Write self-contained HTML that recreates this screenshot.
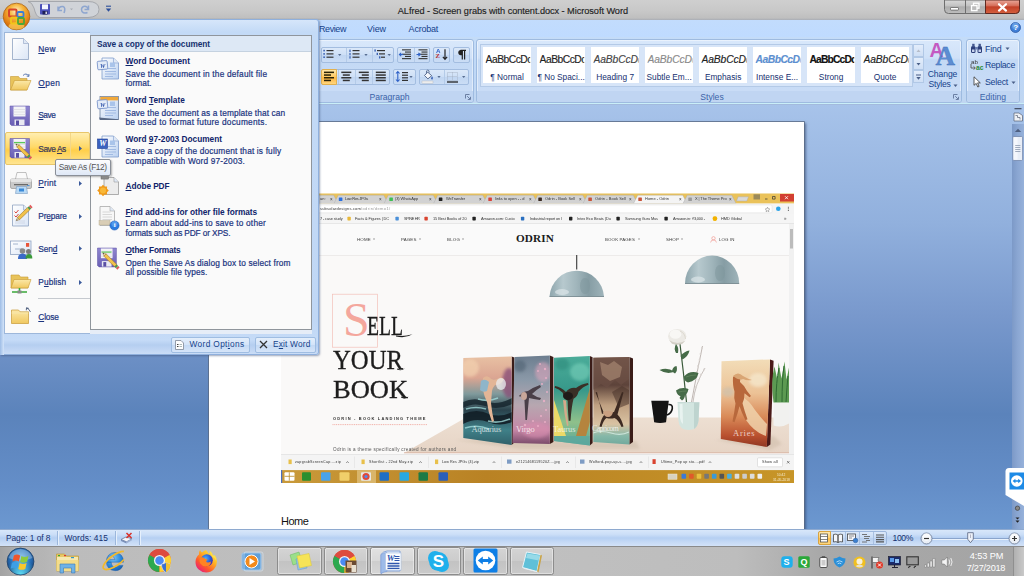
<!DOCTYPE html>
<html lang="en"><head><meta charset="utf-8"><title>ALfred - Screen grabs with content.docx - Microsoft Word</title>
<style>
html,body{margin:0;padding:0;}
body{width:1024px;height:576px;overflow:hidden;position:relative;background:#6f95cb;font-family:"Liberation Sans",sans-serif;}
.t{position:absolute;white-space:nowrap;}
.t u{text-decoration:underline;text-underline-offset:1px;}
div,svg,span{box-sizing:border-box;}
</style></head>
<body>
<div style="position:absolute;left:0px;top:0px;width:1024px;height:19.5px;background:linear-gradient(#cfcfcf,#c8c8c8 55%,#bfbfbf 90%,#a9adb5 100%);"></div>
<div style="position:absolute;left:0px;top:19.5px;width:1024px;height:17.5px;background:linear-gradient(#c2dcfd,#bfdbff);"></div>
<div style="position:absolute;left:0px;top:37px;width:1024px;height:69px;background:linear-gradient(#c4dcf8 0,#bed7f6 60%,#c0d6f1 65.5px,#c9eef8 66.5px,#a3badd 67.5px,#a9c5ed 69px);"></div>
<div style="position:absolute;left:0px;top:105px;width:1024px;height:424px;background:linear-gradient(#a7c3ea 0%,#91b0dd 28%,#7898cc 50%,#5b83bb 73%,#648ec8 90%,#6c98d0 100%);"></div>
<div style="position:absolute;left:209px;top:121.5px;width:595.4px;height:408px;background:#fff;box-shadow:0 0 0 .8px #5b6b85,2px 1px 2.5px rgba(50,70,110,.65);"></div>
<div style="position:absolute;left:0px;top:529px;width:1024px;height:17px;background:linear-gradient(#d8e7fa,#cbdef7 28%,#b5cff2 50%,#c3d8f5 72%,#d2e2f8);border-top:1px solid #8ea9cf;"></div>
<div style="position:absolute;left:0px;top:546px;width:1024px;height:30px;background:linear-gradient(90deg,#a6a6a6 0,#bcbcbc 6%,#c0c0c0 50%,#bdbdbd 72%,#a9a9a9 80%,#a4a4a4 100%);border-top:1px solid #8a8a8a;"></div>
<span class="t" style="left:397.80px;top:6.90px;font-size:9.20px;line-height:9.20px;color:#1e1e1e;font-family:'Liberation Sans',sans-serif;letter-spacing:-0.054px;-webkit-text-stroke:.15px;">ALfred - Screen grabs with content.docx - Microsoft Word</span>
<svg style="position:absolute;left:26px;top:0px;" width="80" height="19" viewBox="0 0 80 19"><path d="M2 1.5 Q6 2 8 8 Q10 17 14 17.5 H62 Q73 17 73 9.5 Q73 1.5 62 1.5 Z" fill="#d0d3d8" stroke="#9a9da3" stroke-width=".8"/><rect x="14" y="4" width="10" height="10.5" rx=".8" fill="#4a4fb8"/><rect x="16" y="4.3" width="6" height="5" fill="#f4f6ff"/><rect x="16.5" y="11" width="5" height="3.5" fill="#1d1f55"/><rect x="19.5" y="11.6" width="1.4" height="2.4" fill="#e8e8f8"/><path d="M32 6.5 v4 h4 M32.3 10.2 Q33 6 37 6.5 Q40 7.5 38 13" fill="none" stroke="#8ea6cf" stroke-width="1.5"/><path d="M44 8.5h3l-1.5 1.8z" fill="#a7abb3"/><path d="M62.5 5.5 v4 h-4 M62.3 9.3 Q61 5.5 57.5 6.5 Q54.5 8 56 11.5 Q58 14 61.5 12.5" fill="none" stroke="#8ea6cf" stroke-width="1.5"/></svg>
<svg style="position:absolute;left:105px;top:5px;" width="7" height="8" viewBox="0 0 7 8"><path d="M1 1.2h5" stroke="#2d4f9a" stroke-width="1.1"/><path d="M.8 3.5h5.4L3.5 6.8z" fill="#2d4f9a"/></svg>
<svg style="position:absolute;left:944px;top:0px;" width="76" height="15" viewBox="0 0 76 15"><defs><linearGradient id="wc1" x1="0" y1="0" x2="0" y2="1"><stop offset="0" stop-color="#d9d9d9"/><stop offset=".45" stop-color="#c2c2c2"/><stop offset=".5" stop-color="#adadad"/><stop offset="1" stop-color="#bdbdbd"/></linearGradient><linearGradient id="wc2" x1="0" y1="0" x2="0" y2="1"><stop offset="0" stop-color="#e9a99b"/><stop offset=".45" stop-color="#d46a55"/><stop offset=".5" stop-color="#c13f27"/><stop offset="1" stop-color="#d5603e"/></linearGradient></defs><path d="M.5 0V9.5Q.5 13.5 4.5 13.5H71.5Q75.5 13.5 75.5 9.5V0Z" fill="url(#wc1)" stroke="#6e6e6e" stroke-width="1"/><path d="M41.5 0V13.5H71.5Q75.5 13.5 75.5 9.5V0Z" fill="url(#wc2)" stroke="#5e2a22" stroke-width="1"/><path d="M21.5 0V13.5" stroke="#6e6e6e" stroke-width="1"/><rect x="6.5" y="7.5" width="8" height="2.6" rx=".6" fill="#fff" stroke="#555" stroke-width=".7"/><rect x="29.5" y="3.2" width="5.5" height="5" fill="none" stroke="#fff" stroke-width="1.3"/><rect x="27.5" y="5.6" width="5.5" height="5" fill="#bbb" stroke="#fff" stroke-width="1.3"/><path d="M55 4.2L62 10.6M62 4.2L55 10.6" stroke="#fff" stroke-width="2.2" stroke-linecap="round"/></svg>
<span class="t" style="left:319.00px;top:25.40px;font-size:9.00px;line-height:9.00px;color:#15428b;font-family:'Liberation Sans',sans-serif;letter-spacing:-0.418px;">Review</span>
<span class="t" style="left:367.00px;top:25.40px;font-size:9.00px;line-height:9.00px;color:#15428b;font-family:'Liberation Sans',sans-serif;letter-spacing:-0.086px;">View</span>
<span class="t" style="left:408.60px;top:25.40px;font-size:9.00px;line-height:9.00px;color:#15428b;font-family:'Liberation Sans',sans-serif;letter-spacing:-0.217px;">Acrobat</span>
<svg style="position:absolute;left:1010px;top:22px;" width="11" height="11" viewBox="0 0 11 11"><circle cx="5.5" cy="5.5" r="5" fill="#3f7fd8" stroke="#1e4c9a" stroke-width=".7"/><circle cx="5.5" cy="4" r="3.4" fill="#7fb2f0" opacity=".6"/></svg><span class="t" style="left:1013.16px;top:23.70px;font-size:8.00px;line-height:8.00px;color:#fff;font-family:'Liberation Sans',sans-serif;font-weight:bold;">?</span>
<div style="position:absolute;left:300px;top:38.5px;width:173.5px;height:64px;border:1px solid #9ebbe0;border-radius:3px;background:linear-gradient(#d9e8fb 0,#cfe1f8 18px,#c3d9f5 20px,#c9dcf6 51px,#c0d6f3 52px,#c0d6f3 100%);box-shadow:inset 0 0 0 1px rgba(255,255,255,.45);"></div>
<div style="position:absolute;left:301px;top:90.5px;width:171.5px;height:11px;background:#c0d5f2;border-radius:0 0 2px 2px;"></div>
<span class="t" style="left:369.42px;top:92.60px;font-size:8.60px;line-height:8.60px;color:#3b63a8;font-family:'Liberation Sans',sans-serif;">Paragraph</span>
<svg style="position:absolute;left:464.5px;top:93.5px;" width="6" height="6" viewBox="0 0 6 6"><path d="M.5 4.5V.5H4.5" fill="none" stroke="#6b7fa3" stroke-width="1"/><path d="M2.2 2.2L5 5M5.5 2.8V5.5H2.8" fill="none" stroke="#6b7fa3" stroke-width="1"/></svg>
<div style="position:absolute;left:476px;top:38.5px;width:486px;height:64px;border:1px solid #9ebbe0;border-radius:3px;background:linear-gradient(#d9e8fb 0,#cfe1f8 18px,#c3d9f5 20px,#c9dcf6 51px,#c0d6f3 52px,#c0d6f3 100%);box-shadow:inset 0 0 0 1px rgba(255,255,255,.45);"></div>
<div style="position:absolute;left:477px;top:90.5px;width:484px;height:11px;background:#c0d5f2;border-radius:0 0 2px 2px;"></div>
<span class="t" style="left:700.29px;top:92.60px;font-size:8.60px;line-height:8.60px;color:#3b63a8;font-family:'Liberation Sans',sans-serif;">Styles</span>
<svg style="position:absolute;left:953px;top:93.5px;" width="6" height="6" viewBox="0 0 6 6"><path d="M.5 4.5V.5H4.5" fill="none" stroke="#6b7fa3" stroke-width="1"/><path d="M2.2 2.2L5 5M5.5 2.8V5.5H2.8" fill="none" stroke="#6b7fa3" stroke-width="1"/></svg>
<div style="position:absolute;left:965.5px;top:38.5px;width:54.0px;height:64px;border:1px solid #9ebbe0;border-radius:3px;background:linear-gradient(#d9e8fb 0,#cfe1f8 18px,#c3d9f5 20px,#c9dcf6 51px,#c0d6f3 52px,#c0d6f3 100%);box-shadow:inset 0 0 0 1px rgba(255,255,255,.45);"></div>
<div style="position:absolute;left:966.5px;top:90.5px;width:52.0px;height:11px;background:#c0d5f2;border-radius:0 0 2px 2px;"></div>
<span class="t" style="left:979.85px;top:92.60px;font-size:8.60px;line-height:8.60px;color:#3b63a8;font-family:'Liberation Sans',sans-serif;">Editing</span>
<div style="position:absolute;left:321px;top:46.5px;width:72.5px;height:16.5px;border:1px solid #a3bde0;border-radius:2px;background:linear-gradient(#dbe8f9,#cddff6 50%,#c1d6f2 52%,#cbddf5);"></div>
<div style="position:absolute;left:396.5px;top:46.5px;width:33.5px;height:16.5px;border:1px solid #a3bde0;border-radius:2px;background:linear-gradient(#dbe8f9,#cddff6 50%,#c1d6f2 52%,#cbddf5);"></div>
<div style="position:absolute;left:432.5px;top:46.5px;width:17.5px;height:16.5px;border:1px solid #a3bde0;border-radius:2px;background:linear-gradient(#dbe8f9,#cddff6 50%,#c1d6f2 52%,#cbddf5);"></div>
<div style="position:absolute;left:453px;top:46.5px;width:17px;height:16.5px;border:1px solid #a3bde0;border-radius:2px;background:linear-gradient(#dbe8f9,#cddff6 50%,#c1d6f2 52%,#cbddf5);"></div>
<div style="position:absolute;left:321px;top:68.5px;width:68.5px;height:16.5px;border:1px solid #a3bde0;border-radius:2px;background:linear-gradient(#dbe8f9,#cddff6 50%,#c1d6f2 52%,#cbddf5);"></div>
<div style="position:absolute;left:392.5px;top:68.5px;width:23.0px;height:16.5px;border:1px solid #a3bde0;border-radius:2px;background:linear-gradient(#dbe8f9,#cddff6 50%,#c1d6f2 52%,#cbddf5);"></div>
<div style="position:absolute;left:418.5px;top:68.5px;width:50.5px;height:16.5px;border:1px solid #a3bde0;border-radius:2px;background:linear-gradient(#dbe8f9,#cddff6 50%,#c1d6f2 52%,#cbddf5);"></div>
<div style="position:absolute;left:321px;top:68.5px;width:16px;height:16.5px;border:1px solid #e2b04e;border-radius:2px 0 0 2px;background:linear-gradient(#ffe7a8,#ffc85e 50%,#ffb640 55%,#ffd67e);"></div>
<div style="position:absolute;left:345.5px;top:47.5px;width:1px;height:14.5px;background:#b4cbe8;"></div>
<div style="position:absolute;left:371.5px;top:47.5px;width:1px;height:14.5px;background:#b4cbe8;"></div>
<div style="position:absolute;left:413.5px;top:47.5px;width:1px;height:14.5px;background:#b4cbe8;"></div>
<div style="position:absolute;left:337.5px;top:69.5px;width:1px;height:14.5px;background:#b4cbe8;"></div>
<div style="position:absolute;left:355px;top:69.5px;width:1px;height:14.5px;background:#b4cbe8;"></div>
<div style="position:absolute;left:372px;top:69.5px;width:1px;height:14.5px;background:#b4cbe8;"></div>
<div style="position:absolute;left:444px;top:69.5px;width:1px;height:14.5px;background:#b4cbe8;"></div>
<svg style="position:absolute;left:300px;top:40px;" width="180" height="50" viewBox="300 40 180 50"><rect x="326.5" y="50.0" width="7" height="1.2" fill="#333"/><rect x="326.5" y="53.3" width="7" height="1.2" fill="#333"/><rect x="326.5" y="56.6" width="7" height="1.2" fill="#333"/><rect x="323.3" y="49.8" width="1.6" height="1.6" fill="#3b62b3"/><rect x="323.3" y="53.1" width="1.6" height="1.6" fill="#3b62b3"/><rect x="323.3" y="56.4" width="1.6" height="1.6" fill="#3b62b3"/><path d="M338 54h3.4l-1.7 2z" fill="#596f93"/><rect x="352.5" y="50.0" width="7" height="1.2" fill="#333"/><rect x="352.5" y="53.3" width="7" height="1.2" fill="#333"/><rect x="352.5" y="56.6" width="7" height="1.2" fill="#333"/><rect x="349.4" y="49.6" width="1.2" height="2.4" fill="#3b62b3"/><rect x="349.4" y="52.9" width="1.2" height="2.4" fill="#3b62b3"/><rect x="349.4" y="56.2" width="1.2" height="2.4" fill="#3b62b3"/><path d="M364.3 54h3.4l-1.7 2z" fill="#596f93"/><rect x="377" y="50.0" width="8" height="1.2" fill="#333"/><rect x="379" y="53.3" width="6" height="1.2" fill="#333"/><rect x="381" y="56.6" width="4" height="1.2" fill="#333"/><rect x="374.4" y="49.4" width="1.4" height="2.2" fill="#3b62b3"/><rect x="376.6" y="52.8" width="1.4" height="2.2" fill="#3b62b3"/><rect x="379" y="56.3" width="1.4" height="2.2" fill="#3b62b3"/><path d="M387.5 54h3.4l-1.7 2z" fill="#596f93"/><rect x="402" y="49.3" width="9" height="1.1" fill="#333"/><rect x="405" y="51.5" width="6" height="1.1" fill="#333"/><rect x="402" y="53.7" width="9" height="1.1" fill="#333"/><rect x="405" y="55.9" width="6" height="1.1" fill="#333"/><rect x="402" y="58.1" width="9" height="1.1" fill="#333"/><path d="M403.2 54.5h-3.4M401.2 52.8l-1.8 1.7 1.8 1.7" stroke="#2f62c8" stroke-width="1.1" fill="none"/><rect x="418.5" y="49.3" width="9" height="1.1" fill="#333"/><rect x="421.5" y="51.5" width="6" height="1.1" fill="#333"/><rect x="418.5" y="53.7" width="9" height="1.1" fill="#333"/><rect x="421.5" y="55.9" width="6" height="1.1" fill="#333"/><rect x="418.5" y="58.1" width="9" height="1.1" fill="#333"/><path d="M416.5 54.5h3.6M418.4 52.8l1.8 1.7-1.8 1.7" stroke="#2f62c8" stroke-width="1.1" fill="none"/><path d="M445 49.3V59M442.9 56.8L445 59.4 447.1 56.8" stroke="#222" stroke-width="1.2" fill="none"/><path d="M462.3 50v9.5M464.6 50v9.5M466 50.3h-5.5" stroke="#222" stroke-width="1.2" fill="none"/><path d="M462.3 50h-1.4a2.6 2.6 0 0 0 0 5.2h1.4z" fill="#222"/><rect x="324" y="71.6" width="10" height="1.5" fill="#2a2205"/><rect x="324" y="74.3" width="7" height="1.5" fill="#2a2205"/><rect x="324" y="77.0" width="10" height="1.5" fill="#2a2205"/><rect x="324" y="79.7" width="7" height="1.5" fill="#2a2205"/><rect x="341.3" y="71.6" width="10" height="1.5" fill="#333"/><rect x="342.8" y="74.3" width="7" height="1.5" fill="#333"/><rect x="341.3" y="77.0" width="10" height="1.5" fill="#333"/><rect x="342.8" y="79.7" width="7" height="1.5" fill="#333"/><rect x="358.8" y="71.6" width="10" height="1.5" fill="#333"/><rect x="361.8" y="74.3" width="7" height="1.5" fill="#333"/><rect x="358.8" y="77.0" width="10" height="1.5" fill="#333"/><rect x="361.8" y="79.7" width="7" height="1.5" fill="#333"/><rect x="375.8" y="71.6" width="10" height="1.5" fill="#333"/><rect x="375.8" y="74.3" width="10" height="1.5" fill="#333"/><rect x="375.8" y="77.0" width="10" height="1.5" fill="#333"/><rect x="375.8" y="79.7" width="10" height="1.5" fill="#333"/><rect x="402" y="72.0" width="6" height="1.2" fill="#333"/><rect x="402" y="74.6" width="6" height="1.2" fill="#333"/><rect x="402" y="77.2" width="6" height="1.2" fill="#333"/><rect x="402" y="79.8" width="6" height="1.2" fill="#333"/><path d="M397.8 71.5v10M396 73.5l1.8-2 1.8 2M396 79.5l1.8 2 1.8-2" stroke="#2f62c8" stroke-width="1.1" fill="none"/><path d="M409.3 76h3.4l-1.7 2z" fill="#596f93"/><path d="M424.5 75.5l3.2-3.4 4 3.6-3.8 3.2z" fill="#f4f6fb" stroke="#4b5f86" stroke-width=".9"/><path d="M426.5 73.2q-.6-3 1.3-3.2 1.6.1 1.4 2.6" fill="none" stroke="#4b5f86" stroke-width=".8"/><path d="M432 76q1.5 1.8.7 3.3-1.3.8-1.7-.9z" fill="#3c63b5"/><rect x="422" y="81" width="11" height="2.2" fill="#f0f0f0" stroke="#b9bdc4" stroke-width=".5"/><path d="M437.3 76h3.4l-1.7 2z" fill="#596f93"/><path d="M447.5 72.5h10v8h-10zM452.5 72.5v8M447.5 76.5h10" fill="none" stroke="#9aa4b5" stroke-width=".7" stroke-dasharray="1 1"/><path d="M447 82h11" stroke="#222" stroke-width="1.3"/><path d="M462 76h3.4l-1.7 2z" fill="#596f93"/></svg>
<span class="t" style="left:435.56px;top:47.60px;font-size:18.60px;line-height:18.60px;color:#2f62c8;font-family:'Liberation Sans',sans-serif;font-weight:bold;transform:scale(0.3333,0.3333);transform-origin:0 0;">A</span>
<span class="t" style="left:435.60px;top:53.40px;font-size:6.60px;line-height:6.60px;color:#b8292f;font-family:'Liberation Serif',serif;font-weight:bold;">Z</span>
<div style="position:absolute;left:480px;top:43.5px;width:433px;height:43px;background:#d7e5f8;border:1px solid #b4cae7;"></div>
<div style="position:absolute;left:483.3px;top:47px;width:47.6px;height:35.5px;background:#fff;overflow:hidden;"></div>
<span class="t" style="left:485.50px;top:54.85px;font-size:10.30px;line-height:10.30px;color:#222;font-family:'Liberation Sans',sans-serif;letter-spacing:-0.484px;clip-path:inset(-2px 1.8px -2px 0);-webkit-text-stroke:.15px;">AaBbCcDc</span>
<span class="t" style="left:490.34px;top:73.05px;font-size:8.30px;line-height:8.30px;color:#15306f;font-family:'Liberation Sans',sans-serif;">¶ Normal</span>
<div style="position:absolute;left:537.3px;top:47px;width:47.6px;height:35.5px;background:#fff;overflow:hidden;"></div>
<span class="t" style="left:539.50px;top:54.85px;font-size:10.30px;line-height:10.30px;color:#222;font-family:'Liberation Sans',sans-serif;letter-spacing:-0.484px;clip-path:inset(-2px 1.8px -2px 0);-webkit-text-stroke:.15px;">AaBbCcDc</span>
<span class="t" style="left:537.42px;top:73.05px;font-size:8.30px;line-height:8.30px;color:#15306f;font-family:'Liberation Sans',sans-serif;">¶ No Spaci...</span>
<div style="position:absolute;left:591.3px;top:47px;width:47.6px;height:35.5px;background:#fff;overflow:hidden;"></div>
<span class="t" style="left:593.50px;top:54.85px;font-size:10.30px;line-height:10.30px;color:#444;font-family:'Liberation Sans',sans-serif;font-style:italic;letter-spacing:-0.134px;clip-path:inset(-2px 4.3px -2px 0);-webkit-text-stroke:.15px;">AaBbCcDc</span>
<span class="t" style="left:596.18px;top:73.05px;font-size:8.30px;line-height:8.30px;color:#15306f;font-family:'Liberation Sans',sans-serif;">Heading 7</span>
<div style="position:absolute;left:645.3px;top:47px;width:47.6px;height:35.5px;background:#fff;overflow:hidden;"></div>
<span class="t" style="left:647.50px;top:54.85px;font-size:10.30px;line-height:10.30px;color:#8a8a8a;font-family:'Liberation Sans',sans-serif;font-style:italic;letter-spacing:-0.134px;clip-path:inset(-2px 4.3px -2px 0);-webkit-text-stroke:.15px;">AaBbCcDc</span>
<span class="t" style="left:646.50px;top:73.05px;font-size:8.30px;line-height:8.30px;color:#15306f;font-family:'Liberation Sans',sans-serif;">Subtle Em...</span>
<div style="position:absolute;left:699.3px;top:47px;width:47.6px;height:35.5px;background:#fff;overflow:hidden;"></div>
<span class="t" style="left:701.50px;top:54.85px;font-size:10.30px;line-height:10.30px;color:#222;font-family:'Liberation Sans',sans-serif;font-style:italic;letter-spacing:-0.134px;clip-path:inset(-2px 4.3px -2px 0);-webkit-text-stroke:.15px;">AaBbCcDc</span>
<span class="t" style="left:704.88px;top:73.05px;font-size:8.30px;line-height:8.30px;color:#15306f;font-family:'Liberation Sans',sans-serif;">Emphasis</span>
<div style="position:absolute;left:753.3px;top:47px;width:47.6px;height:35.5px;background:#fff;overflow:hidden;"></div>
<span class="t" style="left:755.50px;top:54.85px;font-size:10.30px;line-height:10.30px;color:#5c8fd0;font-family:'Liberation Sans',sans-serif;font-weight:bold;font-style:italic;letter-spacing:-0.491px;clip-path:inset(-2px 4.3px -2px 0);-webkit-text-stroke:.15px;">AaBbCcDc</span>
<span class="t" style="left:756.11px;top:73.05px;font-size:8.30px;line-height:8.30px;color:#15306f;font-family:'Liberation Sans',sans-serif;">Intense E...</span>
<div style="position:absolute;left:807.3px;top:47px;width:47.6px;height:35.5px;background:#fff;overflow:hidden;"></div>
<span class="t" style="left:809.50px;top:54.85px;font-size:10.30px;line-height:10.30px;color:#111;font-family:'Liberation Sans',sans-serif;font-weight:bold;letter-spacing:-0.841px;clip-path:inset(-2px 1.8px -2px 0);-webkit-text-stroke:.15px;">AaBbCcDc</span>
<span class="t" style="left:818.87px;top:73.05px;font-size:8.30px;line-height:8.30px;color:#15306f;font-family:'Liberation Sans',sans-serif;">Strong</span>
<div style="position:absolute;left:861.3px;top:47px;width:47.6px;height:35.5px;background:#fff;overflow:hidden;"></div>
<span class="t" style="left:863.50px;top:54.85px;font-size:10.30px;line-height:10.30px;color:#222;font-family:'Liberation Sans',sans-serif;font-style:italic;letter-spacing:-0.134px;clip-path:inset(-2px 4.3px -2px 0);-webkit-text-stroke:.15px;">AaBbCcDc</span>
<span class="t" style="left:873.79px;top:73.05px;font-size:8.30px;line-height:8.30px;color:#15306f;font-family:'Liberation Sans',sans-serif;">Quote</span>
<div style="position:absolute;left:912.7px;top:43.5px;width:11px;height:13.4px;border:1px solid #b1c8e6;background:linear-gradient(#e3edfb,#cfdff5);"></div>
<div style="position:absolute;left:912.7px;top:56.8px;width:11px;height:13.4px;border:1px solid #b1c8e6;background:linear-gradient(#e3edfb,#cfdff5);"></div>
<div style="position:absolute;left:912.7px;top:70.1px;width:11px;height:13.4px;border:1px solid #b1c8e6;background:linear-gradient(#e3edfb,#cfdff5);"></div>
<svg style="position:absolute;left:912.7px;top:43.5px;" width="11" height="40" viewBox="0 0 11 40"><path d="M3.5 8L5.5 5.5 7.5 8z" fill="#b5bcc8"/><path d="M3.5 19L5.5 21.5 7.5 19z" fill="#4a5f88"/><path d="M3 31h5" stroke="#4a5f88" stroke-width="1"/><path d="M3.3 33L5.5 35.7 7.7 33z" fill="#4a5f88"/></svg>
<span class="t" style="left:929.56px;top:41.45px;font-size:19.50px;line-height:19.50px;color:#c45ac2;font-family:'Liberation Sans',sans-serif;font-weight:bold;">A</span>
<span class="t" style="left:935.55px;top:42.50px;font-size:27.00px;line-height:27.00px;color:#5c8dd2;font-family:'Liberation Serif',serif;font-weight:bold;-webkit-text-stroke:.4px #3f6fb8;">A</span>
<span class="t" style="left:927.75px;top:70.10px;font-size:8.60px;line-height:8.60px;color:#15428b;font-family:'Liberation Sans',sans-serif;letter-spacing:-0.104px;">Change</span>
<span class="t" style="left:928.50px;top:79.90px;font-size:8.60px;line-height:8.60px;color:#15428b;font-family:'Liberation Sans',sans-serif;letter-spacing:-0.237px;">Styles</span>
<svg style="position:absolute;left:952.5px;top:83.5px;" width="5" height="4" viewBox="0 0 5 4"><path d="M.5 .5h4L2.5 3z" fill="#4a5f88"/></svg>
<span class="t" style="left:985.00px;top:44.60px;font-size:8.80px;line-height:8.80px;color:#15428b;font-family:'Liberation Sans',sans-serif;letter-spacing:-0.155px;">Find</span>
<svg style="position:absolute;left:1005px;top:47.3px;" width="5" height="4" viewBox="0 0 5 4"><path d="M.5 .5h4L2.5 3z" fill="#4a5f88"/></svg>
<span class="t" style="left:985.00px;top:61.20px;font-size:8.80px;line-height:8.80px;color:#15428b;font-family:'Liberation Sans',sans-serif;letter-spacing:-0.327px;">Replace</span>
<span class="t" style="left:985.00px;top:78.00px;font-size:8.80px;line-height:8.80px;color:#15428b;font-family:'Liberation Sans',sans-serif;letter-spacing:-0.243px;">Select</span>
<svg style="position:absolute;left:1010.5px;top:81px;" width="5" height="4" viewBox="0 0 5 4"><path d="M.5 .5h4L2.5 3z" fill="#4a5f88"/></svg>
<svg style="position:absolute;left:970px;top:43px;" width="13" height="11" viewBox="0 0 13 11"><rect x="1" y="3" width="4.5" height="7" rx="1.5" fill="#2d3f7a"/><rect x="7.5" y="3" width="4.5" height="7" rx="1.5" fill="#2d3f7a"/><rect x="2.2" y=".8" width="2.4" height="3" fill="#43578f"/><rect x="8.5" y=".8" width="2.4" height="3" fill="#43578f"/><rect x="5" y="4" width="3" height="2.5" fill="#6b7fb2"/><rect x="2" y="6.5" width="2.5" height="2.5" fill="#c9d4ee"/><rect x="8.5" y="6.5" width="2.5" height="2.5" fill="#c9d4ee"/></svg>
<span class="t" style="left:970.50px;top:59.40px;font-size:18.60px;line-height:18.60px;color:#333;font-family:'Liberation Sans',sans-serif;transform:scale(0.3333,0.3333);transform-origin:0 0;">ab</span><span class="t" style="left:976.00px;top:64.60px;font-size:6.80px;line-height:6.80px;color:#2a8a3a;font-family:'Liberation Sans',sans-serif;font-weight:bold;">ac</span><svg style="position:absolute;left:970px;top:63.5px;" width="7" height="6" viewBox="0 0 7 6"><path d="M1 0v4h4M3.5 2.3L5.3 4 3.5 5.7" fill="none" stroke="#555" stroke-width=".9"/></svg>
<svg style="position:absolute;left:973px;top:76px;" width="8" height="12" viewBox="0 0 8 12"><path d="M1 .8V9.3L3.2 7.4 4.8 11 6.1 10.4 4.6 6.9H7.3Z" fill="#fff" stroke="#333" stroke-width=".8"/></svg>
<span class="t" style="left:281.00px;top:515.80px;font-size:11.00px;line-height:11.00px;color:#111;font-family:'Liberation Sans',sans-serif;letter-spacing:-0.511px;">Home</span>
<svg style="position:absolute;left:281px;top:193px;" width="513" height="290.5" viewBox="281 193 513 290.5"><defs><linearGradient id="lamp" x1="0" y1="0" x2="1" y2="0"><stop offset="0" stop-color="#8da5ac"/><stop offset=".25" stop-color="#b7c9ce"/><stop offset=".5" stop-color="#a0b5bb"/><stop offset=".72" stop-color="#869da4"/><stop offset="1" stop-color="#9fb4ba"/></linearGradient><linearGradient id="wood" x1="0" y1="0" x2="0" y2="1"><stop offset="0" stop-color="#eddfd2"/><stop offset="1" stop-color="#e6d4c5"/></linearGradient><linearGradient id="bk1" x1="0" y1="0" x2="1" y2="1"><stop offset="0" stop-color="#e9b89a"/><stop offset=".35" stop-color="#c98f86"/><stop offset=".6" stop-color="#5f8f93"/><stop offset="1" stop-color="#27424a"/></linearGradient><linearGradient id="bk2" x1="0" y1="0" x2="0" y2="1"><stop offset="0" stop-color="#5f7f8c"/><stop offset=".4" stop-color="#8a8e9a"/><stop offset=".75" stop-color="#b0778a"/><stop offset="1" stop-color="#6a3f55"/></linearGradient><linearGradient id="bk3" x1="0" y1="0" x2="0" y2="1"><stop offset="0" stop-color="#57b39c"/><stop offset=".5" stop-color="#3f9a86"/><stop offset=".8" stop-color="#c9a95f"/><stop offset="1" stop-color="#5aa08c"/></linearGradient><linearGradient id="bk4" x1="0" y1="0" x2="0" y2="1"><stop offset="0" stop-color="#8a6b5a"/><stop offset=".5" stop-color="#5f4a42"/><stop offset=".8" stop-color="#9c8a76"/><stop offset="1" stop-color="#7fb0a6"/></linearGradient><linearGradient id="bk5" x1="0" y1="0" x2="0" y2="1"><stop offset="0" stop-color="#f3dcb8"/><stop offset=".45" stop-color="#e7b98a"/><stop offset=".8" stop-color="#c4663f"/><stop offset="1" stop-color="#8e3626"/></linearGradient><linearGradient id="wtb" x1="0" y1="0" x2="1" y2="0"><stop offset="0" stop-color="#c99a3a"/><stop offset=".4" stop-color="#b98224"/><stop offset="1" stop-color="#c79528"/></linearGradient></defs><rect x="281" y="193.5" width="513" height="289.5" fill="#faf9f8"/><rect x="281" y="193.5" width="513" height="10.2" fill="#eac25a"/><path d="M284.5 203.5L288.7 195.2H333.8L338 203.5Z" fill="#d2d2d2" stroke="#a9a9a9" stroke-width=".4"/><path d="M334 203.5L338.2 195.2H383.8L388 203.5Z" fill="#d2d2d2" stroke="#a9a9a9" stroke-width=".4"/><path d="M384 203.5L388.2 195.2H433.3L437.5 203.5Z" fill="#d2d2d2" stroke="#a9a9a9" stroke-width=".4"/><path d="M433.5 203.5L437.7 195.2H482.8L487 203.5Z" fill="#d2d2d2" stroke="#a9a9a9" stroke-width=".4"/><path d="M483 203.5L487.2 195.2H533.3L537.5 203.5Z" fill="#d2d2d2" stroke="#a9a9a9" stroke-width=".4"/><path d="M533.5 203.5L537.7 195.2H582.8L587 203.5Z" fill="#d2d2d2" stroke="#a9a9a9" stroke-width=".4"/><path d="M583 203.5L587.2 195.2H633.3L637.5 203.5Z" fill="#d2d2d2" stroke="#a9a9a9" stroke-width=".4"/><path d="M633.5 203.5L637.7 195.2H682.8L687 203.5Z" fill="#f4f4f4" stroke="#a9a9a9" stroke-width=".4"/><path d="M683 203.5L687.2 195.2H731.8L736 203.5Z" fill="#d2d2d2" stroke="#a9a9a9" stroke-width=".4"/><path d="M736.5 201L738.2 196.8H748.5L746.8 201Z" fill="#d9d9d9" stroke="#aaa" stroke-width=".4"/><rect x="338.8" y="197.4" width="3.6" height="3.6" rx=".6" fill="#2a6fe0"/><rect x="389.3" y="197.4" width="3.6" height="3.6" rx=".6" fill="#3fbf55"/><rect x="438.8" y="197.4" width="3.6" height="3.6" rx=".6" fill="#222"/><rect x="488.3" y="197.4" width="3.6" height="3.6" rx=".6" fill="#d9433a"/><rect x="538.3" y="197.4" width="3.6" height="3.6" rx=".6" fill="#3a2a22"/><rect x="588.3" y="197.4" width="3.6" height="3.6" rx=".6" fill="#c8553a"/><rect x="638.3" y="197.4" width="3.6" height="3.6" rx=".6" fill="#c8553a"/><rect x="688.3" y="197.4" width="3.6" height="3.6" rx=".6" fill="#999"/><rect x="780" y="194" width="14" height="7.500" fill="#d23f31"/><rect x="753.5" y="194.3" width="6.5" height="5.2" fill="#9b8a5a"/><path d="M765 199h2.500M772.5 196.500h2.600v2.600h-2.600z" stroke="#333" stroke-width=".7" fill="none"/><path d="M785 196.200l3 3m0-3l-3 3" stroke="#fff" stroke-width=".8"/><rect x="281" y="203.5" width="513" height="10.5" fill="#f4f4f4"/><rect x="281" y="205" width="491" height="7.8" rx="1" fill="#fff" stroke="#d8d8d8" stroke-width=".4"/><rect x="281" y="214" width="513" height="9.3" fill="#f5f5f5"/><rect x="281" y="223.2" width="513" height=".6" fill="#d5d5d5"/><rect x="347.4" y="216.8" width="3.4" height="3.6" rx=".7" fill="#e8b83a"/><rect x="395.4" y="216.8" width="3.4" height="3.6" rx=".7" fill="#4a90d9"/><rect x="424.4" y="216.8" width="3.4" height="3.6" rx=".7" fill="#d9432f"/><rect x="472.4" y="216.8" width="3.4" height="3.6" rx=".7" fill="#222"/><rect x="520.9" y="216.8" width="3.4" height="3.6" rx=".7" fill="#2a6fc0"/><rect x="569.0" y="216.8" width="3.4" height="3.6" rx=".7" fill="#222"/><rect x="616.4" y="216.8" width="3.4" height="3.6" rx=".7" fill="#222"/><rect x="664.4" y="216.8" width="3.4" height="3.6" rx=".7" fill="#222"/><rect x="712.9" y="216.8" width="3.4" height="3.6" rx=".7" fill="#f2b200"/><circle cx="715" cy="218.6" r="2.3" fill="#f2b200"/><circle cx="778.3" cy="208.8" r="2.3" fill="#2aa3e8"/><path d="M766.8 208.800l.7-1.6.7 1.6 1.6.2-1.2 1.1.3 1.6-1.4-.8-1.4.8.3-1.6-1.2-1.100z" fill="none" stroke="#555" stroke-width=".4"/><path d="M788.4 207.2v.1M788.4 208.8v.1M788.4 210.4v.1" stroke="#444" stroke-width=".9" stroke-linecap="round"/><rect x="281" y="223.8" width="508" height="31.5" fill="#fafafa"/><rect x="281" y="255" width="508" height=".6" fill="#e4e2e0"/><rect x="789" y="223.8" width="5" height="230.5" fill="#f1f1f1"/><rect x="790" y="229" width="3" height="19.500" fill="#bcbcbc"/><rect x="576" y="255" width="1.300" height="14.500" fill="#555"/><ellipse cx="590" cy="300" rx="60" ry="22" fill="#e3e0dd" opacity=".0"/><path d="M549.5 296.5A27.3 27.5 0 0 1 604 296.5Z" fill="url(#lamp)"/><path d="M549.5 296.5h54.5" stroke="#5f747b" stroke-width=".7"/><path d="M685 283.5A27.1 28 0 0 1 739.2 283.5Z" fill="url(#lamp)"/><path d="M685 283.5h54.2" stroke="#5f747b" stroke-width=".7"/><ellipse cx="562" cy="292" rx="7" ry="3" fill="#dbe6e8" opacity=".7"/><ellipse cx="698" cy="279.500" rx="7" ry="3" fill="#dbe6e8" opacity=".7"/><ellipse cx="585" cy="286" rx="5" ry="8" fill="#7d959c" opacity=".5"/><ellipse cx="720" cy="273" rx="5" ry="8" fill="#7d959c" opacity=".5"/><path d="M404 453L466 417.4H789V453Z" fill="url(#wood)"/><path d="M404 452.800H789" stroke="#d8b3a3" stroke-width=".9"/><rect x="332.6" y="294.2" width="45" height="53" fill="none" stroke="#f3c0b8" stroke-width=".7"/><path d="M396 335.5q8 1.2 16.5-1.2-7 4.5-16.5 2.200z" fill="#1d1d1d"/><path d="M397 368.500q5 2 8-.5-3 3.5-8 1.500zM401 396.500q5 2.5 8-.5-3 4-8 1.500z" fill="#1d1d1d"/><path d="M332.5 424.6H427" stroke="#ef9a90" stroke-width=".8" stroke-dasharray="1 .8"/><defs><filter id="bl1" x="-20%" y="-20%" width="140%" height="140%"><feGaussianBlur stdDeviation="1.6"/></filter><filter id="bl2" x="-20%" y="-20%" width="140%" height="140%"><feGaussianBlur stdDeviation=".7"/></filter><linearGradient id="c1" x1="0" y1="0" x2="0" y2="1"><stop offset="0" stop-color="#ecc9a8"/><stop offset=".28" stop-color="#dba592"/><stop offset=".44" stop-color="#7f9a9c"/><stop offset=".6" stop-color="#2a424c"/><stop offset=".8" stop-color="#3f8088"/><stop offset="1" stop-color="#2c5660"/></linearGradient><linearGradient id="c2" x1="0" y1="0" x2="0" y2="1"><stop offset="0" stop-color="#66788a"/><stop offset=".3" stop-color="#8b99a8"/><stop offset=".55" stop-color="#b7a7b0"/><stop offset=".8" stop-color="#c587a6"/><stop offset="1" stop-color="#5c3252"/></linearGradient><linearGradient id="c3" x1="0" y1="0" x2="0" y2="1"><stop offset="0" stop-color="#4fb09c"/><stop offset=".4" stop-color="#37988a"/><stop offset=".72" stop-color="#8fc08a"/><stop offset="1" stop-color="#4fa39c"/></linearGradient><linearGradient id="c4" x1="0" y1="0" x2="0" y2="1"><stop offset="0" stop-color="#8d6c5a"/><stop offset=".35" stop-color="#5d433a"/><stop offset=".55" stop-color="#bfa081"/><stop offset=".74" stop-color="#d9c2a2"/><stop offset=".86" stop-color="#86b8a8"/><stop offset="1" stop-color="#64a096"/></linearGradient><linearGradient id="c5" x1="0" y1="0" x2="0" y2="1"><stop offset="0" stop-color="#f3e0bc"/><stop offset=".4" stop-color="#ecc296"/><stop offset=".65" stop-color="#d98a58"/><stop offset=".85" stop-color="#b9502f"/><stop offset="1" stop-color="#84301f"/></linearGradient><clipPath id="k1"><path d="M463.3 358L511.6 356.4V445L463.3 438Z"/></clipPath><clipPath id="k2"><path d="M514.6 357L549.8 355.6V444L512.4 443Z"/></clipPath><clipPath id="k3"><path d="M554 357.8L589.8 356V445.5L554 441Z"/></clipPath><clipPath id="k4"><path d="M593.3 357.8L629.4 357V444.6L593.3 442Z"/></clipPath><clipPath id="k5"><path d="M721.5 361.2L770 359.4L766.8 447L720.8 439Z"/></clipPath></defs><path d="M455 440L520 449H640L636 441Z" fill="#cdbba8" opacity=".55" filter="url(#bl1)"/><path d="M716 440L770 450L782 444L774 436Z" fill="#cdbba8" opacity=".55" filter="url(#bl1)"/><path d="M511.6 356.4L514.4 357.6V442.5L511.6 445Z" fill="#3a1c18"/><path d="M549.8 355.6L553.4 357V442L549.8 444Z" fill="#3a1c18"/><path d="M589.8 356L592.6 357.2V443L589.8 445.5Z" fill="#3a1c18"/><path d="M629.4 357L633 358.4V442L629.4 444.6Z" fill="#3a1c18"/><path d="M770 359.4L773.6 360.8L770.4 444.5L766.8 447Z" fill="#4a1a18"/><g clip-path="url(#k1)"><rect x="460" y="350" width="56" height="100" fill="url(#c1)"/><ellipse cx="509" cy="383" rx="7" ry="15" fill="#8a4f78" opacity=".8" filter="url(#bl1)"/><ellipse cx="470" cy="368" rx="9" ry="9" fill="#f3d2b0" opacity=".7" filter="url(#bl1)"/><path d="M463 402q10-5 22-1 12 5 27-3v6q-14 7-27 2-12-4-22 2z" fill="#16262e" opacity=".85"/><path d="M463 414q14-6 26 0 12 4 23-2v10q-12 5-24 0-12-5-25 2z" fill="#121e26" opacity=".9"/><path d="M466 409q10-3 20 0M488 421q10 3 22-2M465 428q12-4 24 1M478 399q10 3 20-1" stroke="#a5e2e0" stroke-width="1.6" fill="none" opacity=".75"/><path d="M483 378q3-3 6-1 3 4 8 2 4-3 7 0-3 6-9 6-2 2-3 6l-1 12q1 10 3 18l-2 1q-4-10-5-20-3-6-4-12-1-6 0-12z" fill="#e2b596"/><path d="M481 381q4-3 8 1l-2 9q-4 2-7-1z" fill="#8fb5c9"/><ellipse cx="501" cy="384" rx="5" ry="6" fill="#e9eef0" opacity=".75"/></g><g clip-path="url(#k2)"><rect x="510" y="350" width="46" height="100" fill="url(#c2)"/><ellipse cx="543" cy="372" rx="8" ry="10" fill="#e3a6bd" opacity=".55" filter="url(#bl1)"/><ellipse cx="520" cy="366" rx="6" ry="6" fill="#4f6272" opacity=".6" filter="url(#bl1)"/><ellipse cx="536" cy="430" rx="14" ry="8" fill="#d98fb0" opacity=".6" filter="url(#bl1)"/><circle cx="540" cy="364" r="1" fill="#f0b3cb" opacity=".8"/><circle cx="545" cy="369" r="1.2" fill="#f0b3cb" opacity=".8"/><circle cx="538" cy="371" r="0.9" fill="#f0b3cb" opacity=".8"/><circle cx="546" cy="378" r="1" fill="#f0b3cb" opacity=".8"/><circle cx="542" cy="384" r="1.1" fill="#f0b3cb" opacity=".8"/><circle cx="547" cy="392" r="1" fill="#f0b3cb" opacity=".8"/><circle cx="544" cy="401" r="1.2" fill="#f0b3cb" opacity=".8"/><circle cx="546" cy="410" r="1" fill="#f0b3cb" opacity=".8"/><circle cx="541" cy="416" r="1.1" fill="#f0b3cb" opacity=".8"/><circle cx="533" cy="421" r="1" fill="#f0b3cb" opacity=".8"/><circle cx="525" cy="425" r="1.2" fill="#f0b3cb" opacity=".8"/><circle cx="530" cy="430" r="1" fill="#f0b3cb" opacity=".8"/><circle cx="538" cy="426" r="1" fill="#f0b3cb" opacity=".8"/><circle cx="519" cy="431" r="0.9" fill="#f0b3cb" opacity=".8"/><circle cx="545" cy="422" r="1" fill="#f0b3cb" opacity=".8"/><path d="M519 397q3-6 9-6 6-4 12-6l1 2q-5 3-9 7 4 3 9 4l-1 2q-7-1-11-2-1 10-2 22l-1.6 0q-.5-12-1-21-3-1-5.4-4z" fill="#4a3f48"/><ellipse cx="524" cy="396" rx="3" ry="4" fill="#c9a79a"/></g><g clip-path="url(#k3)"><rect x="550" y="350" width="44" height="100" fill="url(#c3)"/><ellipse cx="580" cy="372" rx="10" ry="9" fill="#7fd6bf" opacity=".55" filter="url(#bl1)"/><ellipse cx="562" cy="364" rx="7" ry="6" fill="#2f8a7c" opacity=".6" filter="url(#bl1)"/><path d="M554 400l12 36h-12z" fill="#ecd968"/><path d="M590 388l-14 48h10l4-14z" fill="#b5843e"/><path d="M554 436h36v10h-36z" fill="#5aa7a0" opacity=".7"/><path d="M555 386q6 1 11 6 4-5 10-4 5-4 12-5l.5 1.800q-6 2-10 7-1 5-5 7-2 8-3 22l-1.8 0q-1-12-1-20-4-3-5-8-4-4-8-5z" fill="#3a2f26"/><ellipse cx="568" cy="396" rx="5" ry="4" fill="#1f1a18"/><path d="M563 400q1 14 4 26l1.5-.5q-2-12-2.5-25z" fill="#d6a98a"/></g><g clip-path="url(#k4)"><rect x="590" y="350" width="44" height="100" fill="url(#c4)"/><path d="M593 357h36v22l-8 6-6-5-8 8-6-4-8 6z" fill="#6b4f44" opacity=".7"/><path d="M600 362l8 3 6-4 8 6-2 10-10 4-8-6z" fill="#a58670" opacity=".7"/><path d="M612 392l10-6 7 4v14l-10 4z" fill="#4a342c" opacity=".55"/><path d="M597 392l5 22q3-2 6-1l6-1 8-20 1.5.5-6 22q4 4 6 12l-2 .6q-3-7-7-9-4 1-8 0-3 2-5 9l-2-.5q2-9 5-12l-9-22z" fill="#3d2a22"/><path d="M603 412q5-3 10 0-1 5-5 5t-5-5z" fill="#c99f80"/><path d="M593 433q8-3 18 0t18-1" stroke="#d8efe6" stroke-width="1.2" fill="none" opacity=".8"/></g><g clip-path="url(#k5)"><rect x="718" y="355" width="56" height="95" fill="url(#c5)"/><ellipse cx="758" cy="380" rx="9" ry="7" fill="#f6ead0" opacity=".7" filter="url(#bl1)"/><ellipse cx="728" cy="392" rx="6" ry="5" fill="#c9c0b0" opacity=".6" filter="url(#bl1)"/><path d="M741 396q8 4 14 14 6 8 12 14l-1 12q-12-4-20-16-4-8-5-24z" fill="#f0d2ac" opacity=".85"/><path d="M733 377q3-3 6-1 2 3 1 6 4 3 7 9l4 5-1.5 1.2-5-4q0 6-2 10 2 8 5 16l-2 1q-4-8-6-14-2 8-5 16l-2-.6q2-10 3-18-2-6-1-12-2-6-1.5-15z" fill="#b8683c"/><path d="M733 376q5-5 10 0 5 3 9 4-5 1-9-1-4 2-10-3z" fill="#d9a574"/></g><path d="M651.3 400.8h17.5l-2.8 21.5q-6 1.5-11.8 0z" fill="#141414"/><path d="M668.3 404.5q4.5-.5 4 4-.8 5-5.3 6.5" fill="none" stroke="#141414" stroke-width="1.6"/><path d="M677.6 402.500h21.800l-.800 18q-.800 9.500-10.100 9.500t-10.100-9.500z" fill="#d3e5e0"/><path d="M694 403h5.300l-.800 17.500q-.5 6-4.500 8.500z" fill="#b9cfca" opacity=".8"/><path d="M679.500 404h3l.5 20q-2.500-2-3-6z" fill="#eef6f4" opacity=".8"/><path d="M677.6 402.500h21.800" stroke="#c2d6d2" stroke-width=".8"/><path d="M686.500 402Q683.500 372 680 344" stroke="#3a5a3a" stroke-width="1.200" fill="none"/><path d="M691.500 402Q697 372 702.500 346" stroke="#b9b0ac" stroke-width=".9" fill="none"/><path d="M693 402Q695 384 705 368" stroke="#b9b0ac" stroke-width=".8" fill="none"/><circle cx="702" cy="348" r=".9" fill="#d9d4d0"/><circle cx="700.5" cy="354" r=".9" fill="#d9d4d0"/><circle cx="699.5" cy="360" r=".9" fill="#d9d4d0"/><circle cx="698" cy="366" r=".9" fill="#d9d4d0"/><circle cx="696.8" cy="372" r=".9" fill="#d9d4d0"/><circle cx="695.5" cy="379" r=".9" fill="#d9d4d0"/><circle cx="704" cy="369.5" r=".9" fill="#d9d4d0"/><circle cx="701" cy="374.5" r=".9" fill="#d9d4d0"/><circle cx="698.5" cy="380" r=".9" fill="#d9d4d0"/><circle cx="696" cy="387" r=".9" fill="#d9d4d0"/><ellipse cx="677.200" cy="336.200" rx="9.200" ry="7.300" fill="#eceae5"/><ellipse cx="675.500" cy="334.200" rx="5.800" ry="4.500" fill="#f8f7f4"/><path d="M669 340q8 5.500 16.500.500l-3 3.300q-5 1.800-10.500 0z" fill="#d3cfc6"/><path d="M680 331q5 2 5.500 8" stroke="#d9d5cc" stroke-width=".8" fill="none"/><path d="M659.500 370q8-3 15 1.800-8 3-15-1.800zM684 376.500q6-6.500 14.500-3.500-1.500 8-10.500 9.500-4.500-1.500-4-6zM676 390.500q5.500-4 12.500-1.500-1 6-6.500 8-5-1.500-6-6.500zM680.500 356q4-5 9-5.500-1 5.500-7 9zM676 353q-2.500-4.500 0-9 3.200 3.500 2 9zM672 371.500q.500-5 4.500-5.500 1.500 4.500-1.500 7.500zM679.500 398q2-4 5.500-3.500 0 4-3 6z" fill="#466b48"/><path d="M686 377q5-2 10-2M678.500 392q4-1 8-1" stroke="#6d9068" stroke-width=".6" fill="none"/><path d="M773.5 402.500h15.500v21q-7 4.5-15.5 2z" fill="#f1f1ef"/><path d="M773.5 402.500q-3-22 1-36l3 14 1-18 3 16 3-17 2 18 2.5-12v35z" fill="#5c9a52"/><path d="M776 402q0-20 3-34M782 402q0-22 2-36M786 402q1-16 2-26" stroke="#2f6a33" stroke-width="1" fill="none"/><rect x="281" y="454.3" width="513" height="15.8" fill="#f4f4f4"/><rect x="281" y="454.3" width="513" height=".6" fill="#dcdcdc"/><rect x="354.5" y="456.5" width=".5" height="11.5" fill="#dcdcdc"/><rect x="428" y="456.5" width=".5" height="11.5" fill="#dcdcdc"/><rect x="501.5" y="456.5" width=".5" height="11.5" fill="#dcdcdc"/><rect x="575.5" y="456.5" width=".5" height="11.5" fill="#dcdcdc"/><rect x="648.5" y="456.5" width=".5" height="11.5" fill="#dcdcdc"/><rect x="288.5" y="459.5" width="3.2" height="4.6" fill="#e8c04a"/><rect x="361.5" y="459.5" width="3.2" height="4.6" fill="#e8c04a"/><rect x="435" y="459.5" width="3.2" height="4.6" fill="#e8c04a"/><rect x="507" y="459.5" width="4.5" height="4.2" fill="#7e9cc4"/><rect x="580" y="459.5" width="4.5" height="4.2" fill="#7e9cc4"/><rect x="652.5" y="459.2" width="3.2" height="4.8" fill="#d9432f"/><path d="M346.2 463l1.3-1.5 1.3 1.5" stroke="#555" stroke-width=".6" fill="none"/><path d="M419.2 463l1.3-1.5 1.3 1.5" stroke="#555" stroke-width=".6" fill="none"/><path d="M492.7 463l1.3-1.5 1.3 1.5" stroke="#555" stroke-width=".6" fill="none"/><path d="M566.2 463l1.3-1.5 1.3 1.5" stroke="#555" stroke-width=".6" fill="none"/><path d="M639.7 463l1.3-1.5 1.3 1.5" stroke="#555" stroke-width=".6" fill="none"/><path d="M708.7 463l1.3-1.5 1.3 1.5" stroke="#555" stroke-width=".6" fill="none"/><rect x="757.5" y="457.8" width="25" height="9" rx="1" fill="#fff" stroke="#c9c9c9" stroke-width=".5"/><path d="M787 461l2.5 2.500m0-2.500l-2.5 2.5" stroke="#444" stroke-width=".6"/><rect x="281" y="470.1" width="513" height="12.9" fill="url(#wtb)"/><rect x="281" y="470.1" width="1.2" height="12.9" fill="#4a6fc0"/><rect x="357" y="470.1" width="19" height="12.9" fill="#d9b56a"/><rect x="284.5" y="472.3" width="10" height="8.4" rx="1" fill="#fff"/><rect x="302" y="472.3" width="9" height="8.4" rx="1" fill="#2a8f2f"/><rect x="321" y="472.3" width="9.5" height="8.4" rx="1" fill="#4aa3e8"/><rect x="339.5" y="472.3" width="10" height="8.4" rx="1" fill="#f0cf6a"/><rect x="361" y="472.3" width="10" height="8.4" rx="1" fill="#e8e8e8"/><rect x="379.5" y="472.3" width="9.5" height="8.4" rx="1" fill="#1f6fc4"/><rect x="399.5" y="472.3" width="9.5" height="8.4" rx="1" fill="#29a8e0"/><rect x="418.5" y="472.3" width="9.5" height="8.4" rx="1" fill="#1d7a45"/><rect x="438.5" y="472.3" width="9.5" height="8.4" rx="1" fill="#2b5fb8"/><circle cx="366" cy="476.5" r="3.6" fill="#de4b39"/><circle cx="366" cy="476.5" r="1.6" fill="#4a8af4"/><path d="M284.5 476.300h10M289.3 472.300v8.4" stroke="#b98a2a" stroke-width=".8"/><rect x="668" y="474" width="9" height="5.300" fill="#d8d2c0" stroke="#f0e8d0" stroke-width=".5"/><rect x="681.5" y="473.800" width="4.600" height="5" rx=".8" fill="#3b7ad6"/><rect x="689.1" y="473.800" width="4.600" height="5" rx=".8" fill="#e05a2a"/><rect x="696.7" y="473.800" width="4.600" height="5" rx=".8" fill="#e8c040"/><rect x="704.3" y="473.800" width="4.600" height="5" rx=".8" fill="#777"/><rect x="711.9" y="473.800" width="4.600" height="5" rx=".8" fill="#3a9ad9"/><rect x="719.5" y="473.800" width="4.600" height="5" rx=".8" fill="#555"/><rect x="727.1" y="473.800" width="4.600" height="5" rx=".8" fill="#4ab0e0"/><rect x="734.7" y="473.800" width="4.600" height="5" rx=".8" fill="#ddd"/><rect x="742.3" y="473.800" width="4.600" height="5" rx=".8" fill="#ccc"/><rect x="749.9" y="473.800" width="4.600" height="5" rx=".8" fill="#ddd"/><rect x="757.5" y="473.800" width="4.600" height="5" rx=".8" fill="#eee"/></svg>
<span class="t" style="left:345.00px;top:197.40px;font-size:12.00px;line-height:12.00px;color:#333;font-family:'Liberation Sans',sans-serif;letter-spacing:-0.863px;transform:scale(0.3333,0.3333);transform-origin:0 0;">Low Res JPGs</span>
<span class="t" style="left:395.00px;top:197.40px;font-size:12.00px;line-height:12.00px;color:#333;font-family:'Liberation Sans',sans-serif;letter-spacing:-0.363px;transform:scale(0.3333,0.3333);transform-origin:0 0;">(3) WhatsApp</span>
<span class="t" style="left:445.50px;top:197.40px;font-size:12.00px;line-height:12.00px;color:#333;font-family:'Liberation Sans',sans-serif;letter-spacing:-0.502px;transform:scale(0.3333,0.3333);transform-origin:0 0;">WeTransfer</span>
<span class="t" style="left:495.00px;top:197.40px;font-size:12.00px;line-height:12.00px;color:#333;font-family:'Liberation Sans',sans-serif;letter-spacing:-0.187px;transform:scale(0.3333,0.3333);transform-origin:0 0;">links to open - - d</span>
<span class="t" style="left:545.00px;top:197.40px;font-size:12.00px;line-height:12.00px;color:#333;font-family:'Liberation Sans',sans-serif;letter-spacing:-0.041px;transform:scale(0.3333,0.3333);transform-origin:0 0;">Odrin - Book Sell</span>
<span class="t" style="left:595.00px;top:197.40px;font-size:12.00px;line-height:12.00px;color:#333;font-family:'Liberation Sans',sans-serif;letter-spacing:0.135px;transform:scale(0.3333,0.3333);transform-origin:0 0;">Odrin - Book Sell</span>
<span class="t" style="left:644.60px;top:197.40px;font-size:12.00px;line-height:12.00px;color:#333;font-family:'Liberation Sans',sans-serif;letter-spacing:-0.002px;transform:scale(0.3333,0.3333);transform-origin:0 0;">Home - Odrin</span>
<span class="t" style="left:694.50px;top:197.40px;font-size:12.00px;line-height:12.00px;color:#333;font-family:'Liberation Sans',sans-serif;letter-spacing:-0.366px;transform:scale(0.3333,0.3333);transform-origin:0 0;">X | The Theme Pro</span>
<span class="t" style="left:329.69px;top:197.15px;font-size:13.50px;line-height:13.50px;color:#333;font-family:'Liberation Sans',sans-serif;transform:scale(0.3333,0.3333);transform-origin:0 0;">×</span>
<span class="t" style="left:379.19px;top:197.15px;font-size:13.50px;line-height:13.50px;color:#333;font-family:'Liberation Sans',sans-serif;transform:scale(0.3333,0.3333);transform-origin:0 0;">×</span>
<span class="t" style="left:429.19px;top:197.15px;font-size:13.50px;line-height:13.50px;color:#333;font-family:'Liberation Sans',sans-serif;transform:scale(0.3333,0.3333);transform-origin:0 0;">×</span>
<span class="t" style="left:478.69px;top:197.15px;font-size:13.50px;line-height:13.50px;color:#333;font-family:'Liberation Sans',sans-serif;transform:scale(0.3333,0.3333);transform-origin:0 0;">×</span>
<span class="t" style="left:529.19px;top:197.15px;font-size:13.50px;line-height:13.50px;color:#333;font-family:'Liberation Sans',sans-serif;transform:scale(0.3333,0.3333);transform-origin:0 0;">×</span>
<span class="t" style="left:578.69px;top:197.15px;font-size:13.50px;line-height:13.50px;color:#333;font-family:'Liberation Sans',sans-serif;transform:scale(0.3333,0.3333);transform-origin:0 0;">×</span>
<span class="t" style="left:628.69px;top:197.15px;font-size:13.50px;line-height:13.50px;color:#333;font-family:'Liberation Sans',sans-serif;transform:scale(0.3333,0.3333);transform-origin:0 0;">×</span>
<span class="t" style="left:678.69px;top:197.15px;font-size:13.50px;line-height:13.50px;color:#333;font-family:'Liberation Sans',sans-serif;transform:scale(0.3333,0.3333);transform-origin:0 0;">×</span>
<span class="t" style="left:728.69px;top:197.15px;font-size:13.50px;line-height:13.50px;color:#333;font-family:'Liberation Sans',sans-serif;transform:scale(0.3333,0.3333);transform-origin:0 0;">×</span>
<span class="t" style="left:320.00px;top:197.40px;font-size:12.00px;line-height:12.00px;color:#333;font-family:'Liberation Sans',sans-serif;transform:scale(0.3333,0.3333);transform-origin:0 0;">an:</span>
<span class="t" style="left:320.00px;top:207.00px;font-size:12.00px;line-height:12.00px;color:#333;font-family:'Liberation Sans',sans-serif;letter-spacing:0.541px;transform:scale(0.3333,0.3333);transform-origin:0 0;">subsolardesigns.com</span><span class="t" style="left:361.20px;top:207.00px;font-size:12.00px;line-height:12.00px;color:#999;font-family:'Liberation Sans',sans-serif;letter-spacing:1.163px;transform:scale(0.3333,0.3333);transform-origin:0 0;">/odrin/demo1/</span>
<span class="t" style="left:320.00px;top:216.65px;font-size:11.70px;line-height:11.70px;color:#333;font-family:'Liberation Sans',sans-serif;letter-spacing:-0.381px;transform:scale(0.3333,0.3333);transform-origin:0 0;">7 - case study</span>
<span class="t" style="left:355.00px;top:216.65px;font-size:11.70px;line-height:11.70px;color:#333;font-family:'Liberation Sans',sans-serif;letter-spacing:-0.318px;transform:scale(0.3333,0.3333);transform-origin:0 0;">Facts &amp; Figures | DC</span>
<span class="t" style="left:404.00px;top:216.65px;font-size:11.70px;line-height:11.70px;color:#333;font-family:'Liberation Sans',sans-serif;letter-spacing:-1.058px;transform:scale(0.3333,0.3333);transform-origin:0 0;">SPINE HR</span>
<span class="t" style="left:433.00px;top:216.65px;font-size:11.70px;line-height:11.70px;color:#333;font-family:'Liberation Sans',sans-serif;letter-spacing:-0.206px;transform:scale(0.3333,0.3333);transform-origin:0 0;">15 Best Books of 20</span>
<span class="t" style="left:480.50px;top:216.65px;font-size:11.70px;line-height:11.70px;color:#333;font-family:'Liberation Sans',sans-serif;letter-spacing:-0.285px;transform:scale(0.3333,0.3333);transform-origin:0 0;">Amazon.com: Custo</span>
<span class="t" style="left:530.00px;top:216.65px;font-size:11.70px;line-height:11.70px;color:#333;font-family:'Liberation Sans',sans-serif;letter-spacing:-0.366px;transform:scale(0.3333,0.3333);transform-origin:0 0;">Industrial report on I</span>
<span class="t" style="left:577.00px;top:216.65px;font-size:11.70px;line-height:11.70px;color:#333;font-family:'Liberation Sans',sans-serif;letter-spacing:-0.108px;transform:scale(0.3333,0.3333);transform-origin:0 0;">Intex Eco Beats (Du</span>
<span class="t" style="left:625.00px;top:216.65px;font-size:11.70px;line-height:11.70px;color:#333;font-family:'Liberation Sans',sans-serif;letter-spacing:-0.315px;transform:scale(0.3333,0.3333);transform-origin:0 0;">Samsung Guru Mus</span>
<span class="t" style="left:673.00px;top:216.65px;font-size:11.70px;line-height:11.70px;color:#333;font-family:'Liberation Sans',sans-serif;letter-spacing:-0.499px;transform:scale(0.3333,0.3333);transform-origin:0 0;">Amazon.in: ₹3,000 -</span>
<span class="t" style="left:721.00px;top:216.65px;font-size:11.70px;line-height:11.70px;color:#333;font-family:'Liberation Sans',sans-serif;letter-spacing:-0.162px;transform:scale(0.3333,0.3333);transform-origin:0 0;">HMD Global</span>
<span class="t" style="left:783.75px;top:216.35px;font-size:13.50px;line-height:13.50px;color:#555;font-family:'Liberation Sans',sans-serif;transform:scale(0.3333,0.3333);transform-origin:0 0;">»</span>
<span class="t" style="left:356.50px;top:237.20px;font-size:13.20px;line-height:13.20px;color:#3a3a3a;font-family:'Liberation Sans',sans-serif;letter-spacing:0.600px;transform:scale(0.3333,0.3333);transform-origin:0 0;">HOME</span>
<span class="t" style="left:400.50px;top:237.20px;font-size:13.20px;line-height:13.20px;color:#3a3a3a;font-family:'Liberation Sans',sans-serif;letter-spacing:0.399px;transform:scale(0.3333,0.3333);transform-origin:0 0;">PAGES</span>
<span class="t" style="left:446.50px;top:237.20px;font-size:13.20px;line-height:13.20px;color:#3a3a3a;font-family:'Liberation Sans',sans-serif;letter-spacing:0.580px;transform:scale(0.3333,0.3333);transform-origin:0 0;">BLOG</span>
<span class="t" style="left:605.00px;top:237.20px;font-size:13.20px;line-height:13.20px;color:#3a3a3a;font-family:'Liberation Sans',sans-serif;letter-spacing:0.368px;transform:scale(0.3333,0.3333);transform-origin:0 0;">BOOK PAGES</span>
<span class="t" style="left:666.00px;top:237.20px;font-size:13.20px;line-height:13.20px;color:#3a3a3a;font-family:'Liberation Sans',sans-serif;letter-spacing:0.398px;transform:scale(0.3333,0.3333);transform-origin:0 0;">SHOP</span>
<span class="t" style="left:719.00px;top:237.20px;font-size:13.20px;line-height:13.20px;color:#3a3a3a;font-family:'Liberation Sans',sans-serif;letter-spacing:0.293px;transform:scale(0.3333,0.3333);transform-origin:0 0;">LOG IN</span>
<span class="t" style="left:372.78px;top:237.25px;font-size:10.50px;line-height:10.50px;color:#666;font-family:'Liberation Sans',sans-serif;transform:scale(0.3333,0.3333);transform-origin:0 0;">˅</span>
<span class="t" style="left:418.78px;top:237.25px;font-size:10.50px;line-height:10.50px;color:#666;font-family:'Liberation Sans',sans-serif;transform:scale(0.3333,0.3333);transform-origin:0 0;">˅</span>
<span class="t" style="left:461.98px;top:237.25px;font-size:10.50px;line-height:10.50px;color:#666;font-family:'Liberation Sans',sans-serif;transform:scale(0.3333,0.3333);transform-origin:0 0;">˅</span>
<span class="t" style="left:637.98px;top:237.25px;font-size:10.50px;line-height:10.50px;color:#666;font-family:'Liberation Sans',sans-serif;transform:scale(0.3333,0.3333);transform-origin:0 0;">˅</span>
<span class="t" style="left:681.48px;top:237.25px;font-size:10.50px;line-height:10.50px;color:#666;font-family:'Liberation Sans',sans-serif;transform:scale(0.3333,0.3333);transform-origin:0 0;">˅</span>
<svg style="position:absolute;left:709.5px;top:235.5px;" width="7" height="7" viewBox="0 0 7 7"><circle cx="3.5" cy="2.3" r="1.7" fill="none" stroke="#f08f86" stroke-width=".6"/><path d="M.6 6.500q.4-2.6 2.9-2.600t2.9 2.6" fill="none" stroke="#f08f86" stroke-width=".6"/></svg>
<span class="t" style="left:516.00px;top:233.20px;font-size:11.20px;line-height:11.20px;color:#1a1a1a;font-family:'Liberation Serif',serif;font-weight:bold;letter-spacing:0.133px;">ODRIN</span>
<span class="t" style="left:343.00px;top:295.86px;font-size:48.00px;line-height:48.00px;color:#f4a79d;font-family:'Liberation Serif',serif;">S</span>
<span class="t" style="left:366.50px;top:312.36px;font-size:28.00px;line-height:28.00px;color:#1d1d1d;font-family:'Liberation Serif',serif;transform:scaleX(0.7016);transform-origin:0 0;-webkit-text-stroke:.35px #1d1d1d;">ELL</span>
<span class="t" style="left:332.50px;top:346.46px;font-size:28.00px;line-height:28.00px;color:#1d1d1d;font-family:'Liberation Serif',serif;transform:scaleX(0.8823);transform-origin:0 0;-webkit-text-stroke:.35px #1d1d1d;">YOUR</span>
<span class="t" style="left:332.50px;top:377.35px;font-size:25.00px;line-height:25.00px;color:#1d1d1d;font-family:'Liberation Serif',serif;transform:scaleX(1.0588);transform-origin:0 0;-webkit-text-stroke:.35px #1d1d1d;">BOOK</span>
<span class="t" style="left:332.50px;top:417.30px;font-size:12.00px;line-height:12.00px;color:#333;font-family:'Liberation Sans',sans-serif;font-weight:bold;letter-spacing:3.532px;transform:scale(0.3333,0.3333);transform-origin:0 0;">ODRIN - BOOK LANDING THEME</span>
<span class="t" style="left:332.50px;top:446.70px;font-size:13.80px;line-height:13.80px;color:#555;font-family:'Liberation Sans',sans-serif;letter-spacing:0.984px;transform:scale(0.3333,0.3333);transform-origin:0 0;">Odrin is a theme specifically created for authors and</span>
<span class="t" style="left:471.50px;top:424.75px;font-size:8.50px;line-height:8.50px;color:rgba(255,255,255,.72);font-family:'Liberation Serif',serif;letter-spacing:-0.208px;">Aquarius</span>
<span class="t" style="left:516.00px;top:424.75px;font-size:8.50px;line-height:8.50px;color:rgba(255,255,255,.72);font-family:'Liberation Serif',serif;letter-spacing:-0.113px;">Virgo</span>
<span class="t" style="left:553.00px;top:424.75px;font-size:8.50px;line-height:8.50px;color:rgba(255,255,255,.72);font-family:'Liberation Serif',serif;letter-spacing:-0.102px;">Taurus</span>
<span class="t" style="left:592.00px;top:425.00px;font-size:8.00px;line-height:8.00px;color:rgba(255,255,255,.72);font-family:'Liberation Serif',serif;letter-spacing:-0.665px;">Capricorn</span>
<span class="t" style="left:733.00px;top:428.75px;font-size:8.50px;line-height:8.50px;color:rgba(255,255,255,.72);font-family:'Liberation Serif',serif;letter-spacing:0.798px;">Aries</span>
<span class="t" style="left:295.00px;top:459.95px;font-size:11.10px;line-height:11.10px;color:#333;font-family:'Liberation Sans',sans-serif;letter-spacing:0.688px;transform:scale(0.3333,0.3333);transform-origin:0 0;">zapgrabScreenCap....zip</span>
<span class="t" style="left:368.50px;top:459.95px;font-size:11.10px;line-height:11.10px;color:#333;font-family:'Liberation Sans',sans-serif;letter-spacing:0.702px;transform:scale(0.3333,0.3333);transform-origin:0 0;">Shortlist - 22nd May.zip</span>
<span class="t" style="left:442.00px;top:459.95px;font-size:11.10px;line-height:11.10px;color:#333;font-family:'Liberation Sans',sans-serif;letter-spacing:0.183px;transform:scale(0.3333,0.3333);transform-origin:0 0;">Low Res JPGs (4).zip</span>
<span class="t" style="left:515.50px;top:459.95px;font-size:11.10px;line-height:11.10px;color:#333;font-family:'Liberation Sans',sans-serif;letter-spacing:0.567px;transform:scale(0.3333,0.3333);transform-origin:0 0;">e2121468119520Z....jpg</span>
<span class="t" style="left:589.00px;top:459.95px;font-size:11.10px;line-height:11.10px;color:#333;font-family:'Liberation Sans',sans-serif;letter-spacing:0.709px;transform:scale(0.3333,0.3333);transform-origin:0 0;">Wolford-pop-up-s....jpg</span>
<span class="t" style="left:661.00px;top:459.95px;font-size:11.10px;line-height:11.10px;color:#333;font-family:'Liberation Sans',sans-serif;letter-spacing:0.539px;transform:scale(0.3333,0.3333);transform-origin:0 0;">Ultimo_Pop up sto....pdf</span>
<span class="t" style="left:762.00px;top:460.40px;font-size:11.40px;line-height:11.40px;color:#333;font-family:'Liberation Sans',sans-serif;letter-spacing:0.614px;transform:scale(0.3333,0.3333);transform-origin:0 0;">Show all</span>
<span class="t" style="left:776.87px;top:472.65px;font-size:9.90px;line-height:9.90px;color:#f6ecd0;font-family:'Liberation Sans',sans-serif;transform:scale(0.3333,0.3333);transform-origin:0 0;">10:42</span><span class="t" style="left:772.56px;top:477.55px;font-size:9.90px;line-height:9.90px;color:#f6ecd0;font-family:'Liberation Sans',sans-serif;transform:scale(0.3333,0.3333);transform-origin:0 0;">31-05-2018</span>
<div style="position:absolute;left:1012px;top:124px;width:12px;height:405px;background:linear-gradient(90deg,#7c99c7,#8aa6d2 45%,#96b1da);"></div>
<svg style="position:absolute;left:1012px;top:105px;" width="12" height="60" viewBox="0 0 12 60"><path d="M2.5 3.700h7" stroke="#3a4254" stroke-width="1.100"/><path d="M2 8h5l3.500 2.500v5.500h-8.500z" fill="#eef1f6" stroke="#5a6274" stroke-width=".7"/><path d="M3.500 10.500h2v2h2.500v2" stroke="#5a6274" stroke-width=".7" fill="none"/><path d="M2.800 27L6 23.800 9.200 27z" fill="#4e5f80"/><rect x=".8" y="31.500" width="9.800" height="24" rx="1.200" fill="#e9eef7" stroke="#7488ac" stroke-width=".8"/><rect x="1.600" y="32.300" width="4" height="22.400" fill="#f7f9fc" opacity=".8"/><path d="M3.200 40.500h5.200M3.200 42.500h5.200M3.200 44.500h5.200M3.200 46.500h5.200" stroke="#8c98ad" stroke-width=".8"/></svg>
<svg style="position:absolute;left:1003.5px;top:467px;" width="20" height="58" viewBox="0 0 20 58"><path d="M20 1H5Q1.5 1 1.5 4.500V28L20 39Z" fill="#fff"/><rect x="5.5" y="5.5" width="14.5" height="17" fill="#1d8ae6"/><circle cx="12.8" cy="14" r="5.8" fill="#fff"/><path d="M8.6 14l2.8-2.200v1.400h2.800v-1.400l2.8 2.2-2.8 2.200v-1.400h-2.800v1.400z" fill="#1d8ae6"/><circle cx="13.5" cy="41.2" r="2.2" fill="#888" stroke="#333" stroke-width=".6"/><path d="M11.5 50.500h4l-2 2zM11.5 53.500h4l-2 2.200z" fill="#222"/></svg>
<span class="t" style="left:6.00px;top:534.10px;font-size:8.40px;line-height:8.40px;color:#15306f;font-family:'Liberation Sans',sans-serif;letter-spacing:-0.067px;">Page: 1 of 8</span>
<span class="t" style="left:64.50px;top:534.10px;font-size:8.40px;line-height:8.40px;color:#15306f;font-family:'Liberation Sans',sans-serif;letter-spacing:0.070px;">Words: 415</span>
<div style="position:absolute;left:57px;top:531px;width:1px;height:14px;background:#9cb7dc;"></div>
<div style="position:absolute;left:58px;top:531px;width:1px;height:14px;background:#e6f0fc;"></div>
<div style="position:absolute;left:115px;top:531px;width:1px;height:14px;background:#9cb7dc;"></div>
<div style="position:absolute;left:116px;top:531px;width:1px;height:14px;background:#e6f0fc;"></div>
<div style="position:absolute;left:139px;top:531px;width:1px;height:14px;background:#9cb7dc;"></div>
<div style="position:absolute;left:140px;top:531px;width:1px;height:14px;background:#e6f0fc;"></div>
<svg style="position:absolute;left:120px;top:531.5px;" width="14" height="12" viewBox="0 0 14 12"><path d="M1 7.500l5-2.5 6 1.8-5.5 3z" fill="#f4f6fb" stroke="#5a6b8c" stroke-width=".7"/><path d="M1 7.500v1.500l5.5 2.500v-1.700z" fill="#7a8fb8"/><path d="M6.5 9.800v1.700l5.5-3.200v-1.500z" fill="#9fb2d6"/><path d="M6.5 1l5 5M11.5 1l-5 5" stroke="#d8312a" stroke-width="1.5"/></svg>
<div style="position:absolute;left:817.5px;top:531px;width:69px;height:14px;border:1px solid #9db7dc;border-radius:2px;background:linear-gradient(#dbe8f9,#c6daf4 50%,#b9d0ef 55%,#cbddf5);"></div>
<div style="position:absolute;left:817.5px;top:531px;width:13.5px;height:14px;border:1px solid #d9a441;border-radius:2px 0 0 2px;background:linear-gradient(#ffe9b0,#ffcd6a 50%,#ffbb45 55%,#ffd982);"></div>
<div style="position:absolute;left:844.5px;top:532px;width:1px;height:12px;background:#a9c1e2;"></div>
<div style="position:absolute;left:858.5px;top:532px;width:1px;height:12px;background:#a9c1e2;"></div>
<div style="position:absolute;left:872.5px;top:532px;width:1px;height:12px;background:#a9c1e2;"></div>
<svg style="position:absolute;left:817px;top:531px;" width="70" height="14" viewBox="0 0 70 14"><rect x="3.5" y="3" width="7" height="8" fill="#fdfdfd" stroke="#555" stroke-width=".8"/><path d="M3.5 5.500h7M3.5 8.500h7" stroke="#555" stroke-width=".7"/><path d="M16.5 3.500q2.5-1 4.5.500v7.500q-2-1.5-4.5-.500zM25.5 3.500q-2.5-1-4.5.500v7.500q2-1.5 4.5-.500z" fill="#f4f6fb" stroke="#444" stroke-width=".8"/><rect x="30.5" y="3" width="8" height="6.5" fill="#f4f6fb" stroke="#444" stroke-width=".8"/><path d="M32 5h5M32 7h3" stroke="#666" stroke-width=".7"/><circle cx="38.5" cy="9.5" r="2.3" fill="#3a7fd0" stroke="#2a5a9a" stroke-width=".5"/><path d="M45 3.500h5M47 5.500h6M47 7.500h5M49 9.500h4M45 11h5" stroke="#666" stroke-width=".9"/><path d="M59 4h8M59 6.300h8M59 8.600h8M59 10.900h8" stroke="#555" stroke-width="1.1"/></svg>
<span class="t" style="left:892.50px;top:534.00px;font-size:8.60px;line-height:8.60px;color:#15306f;font-family:'Liberation Sans',sans-serif;letter-spacing:-0.374px;">100%</span>
<div style="position:absolute;left:932px;top:537.5px;width:77px;height:1px;background:#8aa4cc;"></div>
<div style="position:absolute;left:932px;top:538.5px;width:77px;height:1px;background:#e8f1fc;"></div>
<svg style="position:absolute;left:919.5px;top:531.5px;" width="13" height="13" viewBox="0 0 13 13"><circle cx="6.5" cy="6.5" r="5.5" fill="#e9eef6" stroke="#6f7f9a" stroke-width=".9"/><circle cx="6.5" cy="5" r="3.8" fill="#fff" opacity=".7"/><path d="M4 6.500h5" stroke="#333" stroke-width="1.2"/></svg>
<svg style="position:absolute;left:1007.5px;top:531.5px;" width="13" height="13" viewBox="0 0 13 13"><circle cx="6.5" cy="6.5" r="5.5" fill="#e9eef6" stroke="#6f7f9a" stroke-width=".9"/><circle cx="6.5" cy="5" r="3.8" fill="#fff" opacity=".7"/><path d="M4 6.500h5M6.5 4v5" stroke="#333" stroke-width="1.2"/></svg>
<svg style="position:absolute;left:966.5px;top:532px;" width="7" height="12" viewBox="0 0 7 12"><path d="M.7 .7h5.600v6.500l-2.8 3.5-2.8-3.500z" fill="#eef2f9" stroke="#55627d" stroke-width=".8"/><path d="M3.5 2.500v3.5" stroke="#99a" stroke-width=".7"/></svg>
<div style="position:absolute;left:0px;top:547px;width:60px;height:29px;background:linear-gradient(90deg,#a3a3a3,#b4b4b4 40%,rgba(189,189,189,0) 100%);"></div>
<svg style="position:absolute;left:6px;top:546.5px;" width="30" height="29.5" viewBox="0 0 30 29.5"><defs><radialGradient id="orb" cx=".5" cy=".4" r=".65"><stop offset="0" stop-color="#6fb8ea"/><stop offset=".55" stop-color="#2a74bd"/><stop offset="1" stop-color="#12386e"/></radialGradient><radialGradient id="orb2" cx=".5" cy="1" r=".6"><stop offset="0" stop-color="#5fe0f8"/><stop offset="1" stop-color="#5fe0f8" stop-opacity="0"/></radialGradient></defs><circle cx="14.5" cy="14.5" r="13.4" fill="url(#orb)" stroke="#24466f" stroke-width=".9"/><circle cx="14.5" cy="14.5" r="13" fill="url(#orb2)"/><path d="M2.5 11a12.5 12.5 0 0 1 24 0q-12 5-24 0z" fill="#fff" opacity=".28"/><path d="M7.8 8.600q3.2-2 6.4 0l-1.3 5.800q-3.2-1.6-6.4 0z" fill="#f0562c"/><path d="M15.4 9q3.2 2 7 0l-1.3 5.800q-3.8 1.7-7 0z" fill="#8ecb3c"/><path d="M6 15.700q3.2-1.6 6.4 0l-1.3 5.800q-3.2-1.6-6.4 0z" fill="#3d9fe6"/><path d="M13.6 16.100q3.2 1.7 7 0l-1.3 5.800q-3.8 1.7-7 0z" fill="#f9c82c"/></svg>
<svg style="position:absolute;left:55px;top:550px;" width="25" height="24" viewBox="0 0 25 24"><path d="M1.5 4h8l2 2h12v15h-22z" fill="#e9c867" stroke="#b9952f" stroke-width=".6"/><rect x="2" y="7" width="21" height="4" fill="#f7e9b0"/><path d="M1.5 10h22v11h-22z" fill="#f3dc8a"/><path d="M5 14h15v9h-3.500v-5h-8v5H5z" fill="#6fb2e6" stroke="#3a7ab8" stroke-width=".6"/><rect x="3" y="5" width="2" height="1.2" fill="#3a3"/><rect x="9" y="5" width="2" height="1.2" fill="#d33"/><rect x="16" y="7" width="3" height="1.2" fill="#39c"/></svg>
<svg style="position:absolute;left:100px;top:547px;" width="30" height="28" viewBox="0 0 30 28"><defs><radialGradient id="ieg" cx=".4" cy=".3" r=".8"><stop offset="0" stop-color="#7fc6f4"/><stop offset=".5" stop-color="#2f8ee0"/><stop offset="1" stop-color="#1558a8"/></radialGradient></defs><path d="M5.8 15.200h16.400q.3-4.5-2.3-7.2-2.6-2.6-6.3-2.6-3.6 0-6.1 2.6-2.4 2.6-2.4 6.6 0 4.2 2.5 6.7 2.5 2.4 6.4 2.4 5.8 0 7.8-5.300h-4.600q-1 1.7-3.2 1.7-3.6 0-4-4.900zm.2-2.600q.6-3.8 3.8-3.8 3.3 0 3.9 3.800z" fill="url(#ieg)" stroke="#1558a8" stroke-width=".4" transform="translate(1.2 0)"/><ellipse cx="15" cy="13.5" rx="14" ry="5.2" fill="none" stroke="#f2b92c" stroke-width="1.7" transform="rotate(-35 15 13.5)" stroke-dasharray="52 14" stroke-dashoffset="-8"/></svg>
<svg style="position:absolute;left:147.3px;top:548.2px;" width="25.0" height="25.0" viewBox="0 0 25.0 25.0"><circle cx="12.5" cy="12.5" r="11.5" fill="#dd4b3e"/><path d="M12.5 12.5L2.54 6.75A11.5 11.5 0 0 0 12.5 24.0Z" fill="#2da94f"/><path d="M12.5 12.5L12.5 24.0A11.5 11.5 0 0 0 22.46 6.75Z" fill="#fdd231"/><path d="M12.5 12.5L2.54 6.75A11.5 11.5 0 0 1 22.46 6.75Z" fill="#dd4b3e"/><circle cx="12.5" cy="12.5" r="5.52" fill="#f3f3f3"/><circle cx="12.5" cy="12.5" r="4.25" fill="#4a8af4"/></svg>
<svg style="position:absolute;left:160.5px;top:561.5px;" width="10" height="11" viewBox="0 0 10 11"><path d="M5 .5q2 1.5 4.5 1.5 0 6-4.5 8.5-4.5-2.5-4.5-8.5 2.5 0 4.5-1.500z" fill="#3a6fd0" stroke="#e8e8e8" stroke-width=".6"/><path d="M5 .5v10q4.5-2.5 4.5-8.5-2.5 0-4.5-1.500z" fill="#f2c230"/></svg>
<svg style="position:absolute;left:193px;top:547px;" width="26" height="27" viewBox="0 0 26 27"><defs><linearGradient id="ffx" x1=".9" y1=".1" x2=".2" y2=".95"><stop offset="0" stop-color="#fff04a"/><stop offset=".35" stop-color="#ffb224"/><stop offset=".7" stop-color="#ff5a2a"/><stop offset="1" stop-color="#e8207a"/></linearGradient><radialGradient id="ffg" cx=".4" cy=".35" r=".7"><stop offset="0" stop-color="#4ab0f8"/><stop offset=".6" stop-color="#2a5ad8"/><stop offset="1" stop-color="#4a2aa8"/></radialGradient></defs><path d="M13 3q-2 .5-4 2.5-1-.5-2-2.5-1.5 2-1 4.5-3.5 3-3.5 7.5 0 4.5 3.2 7.5 3.2 3 7.5 3 4.5 0 7.7-3.2 3.1-3.3 3.1-7.8 0-3.5-2-6-1 .2-1.5 1-.5-3.5-3.5-5.5 0 1.8-1.2 2.8-1.3-2.3-2.8-3.800z" fill="url(#ffx)"/><circle cx="13.8" cy="13.3" r="6" fill="url(#ffg)"/><path d="M7.3 10.5q2.5-1 4.2.8l3 1.5q-1.800 1-1.200 2.300 2 1 4.500-.7.300 3.800-3.500 4.800-4.500.8-7-2.700-1.500-3 0-6z" fill="#ff8324"/><path d="M15.5 3.500q3.5 2 4.2 5.5 1.3-1 1.6-1 2.2 2.8 2 6-1.2-3.5-4-4.5-1.3-3.5-3.8-6z" fill="#ffe14a"/></svg>
<svg style="position:absolute;left:241px;top:551px;" width="24" height="22" viewBox="0 0 24 22"><rect x="1" y="2" width="19" height="17" rx="2" fill="#5f9fd8" stroke="#9cc4ea" stroke-width="1.2"/><rect x="3" y="1" width="19" height="19" rx="2" fill="none" stroke="#d8e8f6" stroke-width=".8" opacity=".7"/><circle cx="10.5" cy="10.5" r="6.5" fill="#f38a1c" stroke="#fff" stroke-width="1"/><path d="M8.5 7l5.5 3.5-5.5 3.500z" fill="#fff"/></svg>
<div style="position:absolute;left:277px;top:546.8px;width:44.5px;height:28.2px;border:1px solid #8c8c8c;border-radius:2.500px;background:linear-gradient(#d4d4d4,#cccccc 48%,#c3c3c3 52%,#cacaca);box-shadow:inset 0 0 0 1px rgba(255,255,255,.4);"></div>
<div style="position:absolute;left:323.5px;top:546.8px;width:44.5px;height:28.2px;border:1px solid #8c8c8c;border-radius:2.500px;background:linear-gradient(#d4d4d4,#cccccc 48%,#c3c3c3 52%,#cacaca);box-shadow:inset 0 0 0 1px rgba(255,255,255,.4);"></div>
<div style="position:absolute;left:370px;top:546.8px;width:44.5px;height:28.2px;border:1px solid #8c8c8c;border-radius:2.500px;background:linear-gradient(#e2e2e2,#d9d9d9 48%,#cecece 52%,#d6d6d6);box-shadow:inset 0 0 0 1px rgba(255,255,255,.4);"></div>
<div style="position:absolute;left:416.5px;top:546.8px;width:44.5px;height:28.2px;border:1px solid #8c8c8c;border-radius:2.500px;background:linear-gradient(#d4d4d4,#cccccc 48%,#c3c3c3 52%,#cacaca);box-shadow:inset 0 0 0 1px rgba(255,255,255,.4);"></div>
<div style="position:absolute;left:463px;top:546.8px;width:44.5px;height:28.2px;border:1px solid #8c8c8c;border-radius:2.500px;background:linear-gradient(#d4d4d4,#cccccc 48%,#c3c3c3 52%,#cacaca);box-shadow:inset 0 0 0 1px rgba(255,255,255,.4);"></div>
<div style="position:absolute;left:509.5px;top:546.8px;width:44.5px;height:28.2px;border:1px solid #8c8c8c;border-radius:2.500px;background:linear-gradient(#d4d4d4,#cccccc 48%,#c3c3c3 52%,#cacaca);box-shadow:inset 0 0 0 1px rgba(255,255,255,.4);"></div>
<svg style="position:absolute;left:287px;top:549px;" width="26" height="24" viewBox="0 0 26 24"><path d="M3 6l9-3 3 10-9 3z" fill="#9adf8a" stroke="#6ab85e" stroke-width=".5"/><path d="M9 10l9-2 2 11-9 2z" fill="#8ec0ee" stroke="#5a94cc" stroke-width=".5" opacity=".9"/><path d="M10 7l12-2.5 2.5 12-12 2.500z" fill="#f6e458" stroke="#d8c43a" stroke-width=".5"/></svg>
<svg style="position:absolute;left:332.4px;top:548.5px;" width="25.0" height="25.0" viewBox="0 0 25.0 25.0"><circle cx="12.5" cy="12.5" r="11.5" fill="#dd4b3e"/><path d="M12.5 12.5L2.54 6.75A11.5 11.5 0 0 0 12.5 24.0Z" fill="#2da94f"/><path d="M12.5 12.5L12.5 24.0A11.5 11.5 0 0 0 22.46 6.75Z" fill="#fdd231"/><path d="M12.5 12.5L2.54 6.75A11.5 11.5 0 0 1 22.46 6.75Z" fill="#dd4b3e"/><circle cx="12.5" cy="12.5" r="5.52" fill="#f3f3f3"/><circle cx="12.5" cy="12.5" r="4.25" fill="#4a8af4"/></svg>
<svg style="position:absolute;left:345px;top:560px;" width="12" height="13" viewBox="0 0 12 13"><rect x=".5" y=".5" width="11" height="12" fill="#6a4a32"/><rect x="2" y="2" width="5" height="6" fill="#d9b08a"/><rect x="6.5" y="5" width="4.5" height="7" fill="#e8e0d0"/></svg>
<svg style="position:absolute;left:378px;top:548.5px;" width="28" height="25" viewBox="0 0 28 25"><path d="M3 5.500q2-3 6-3.500h13v20h-13q-4 .5-6 2.500z" fill="#dfe9f8" stroke="#7f9fd8" stroke-width=".9"/><path d="M3 5.500q3-2 6-2v19q-3 0-6 2z" fill="#9dbbe8" stroke="#7f9fd8" stroke-width=".6"/><rect x="7.5" y="4" width="15.5" height="17" fill="#fbfcfe" stroke="#a9bfe2" stroke-width=".6"/><path d="M9.5 14.500h12M9.5 17h12M9.5 19.300h12" stroke="#2f55ad" stroke-width="1.3"/><path d="M16.5 7.500h5M16.5 9.500h5M16.5 11.500h5" stroke="#2f55ad" stroke-width="1"/></svg><span class="t" style="left:386.80px;top:553.50px;font-size:9.00px;line-height:9.00px;color:#2f55ad;font-family:'Liberation Serif',serif;font-weight:bold;font-style:italic;">W</span>
<svg style="position:absolute;left:426px;top:548.5px;" width="25" height="25" viewBox="0 0 25 25"><circle cx="9" cy="9" r="7" fill="#1fb0ec"/><circle cx="16" cy="16" r="7" fill="#1fb0ec"/><circle cx="12.5" cy="12.5" r="9.5" fill="#1fb0ec"/></svg><span class="t" style="left:432.83px;top:552.80px;font-size:17.00px;line-height:17.00px;color:#fff;font-family:'Liberation Sans',sans-serif;font-weight:bold;">S</span>
<svg style="position:absolute;left:472.5px;top:548.3px;" width="25" height="25" viewBox="0 0 25 25"><rect x=".5" y=".5" width="24" height="24" rx="1.5" fill="#0e7fe6"/><circle cx="12.5" cy="12.5" r="9.8" fill="#fff"/><path d="M4.8 12.500l5-4v2.600h5.400v-2.600l5 4-5 4v-2.600h-5.400v2.600z" fill="#0e7fe6"/></svg>
<svg style="position:absolute;left:519.5px;top:549.5px;" width="24" height="23" viewBox="0 0 24 23"><path d="M6.5 2l14 2.5-3.5 17-14.5-4z" fill="#5fc0d8" stroke="#e8f4f8" stroke-width="1"/><path d="M7.5 3.500l12 2-1 5-12.5-2.500z" fill="#a5e0ec" opacity=".8"/><path d="M20.5 4.500l1.5 1-3.5 17-1.5-1z" fill="#c9a44a"/><path d="M2.5 17.500l14.5 4 1.5 1-14-3.500z" fill="#e9eef2"/></svg>
<svg style="position:absolute;left:780.5px;top:556px;" width="12" height="12" viewBox="0 0 12 12"><rect x=".3" y=".3" width="11.4" height="11.4" rx="3" fill="#1fb0ec"/></svg><span class="t" style="left:783.50px;top:557.70px;font-size:9.00px;line-height:9.00px;color:#fff;font-family:'Liberation Sans',sans-serif;font-weight:bold;">S</span>
<svg style="position:absolute;left:798px;top:556px;" width="12" height="12" viewBox="0 0 12 12"><rect x=".3" y=".3" width="11.4" height="11.4" rx="1.5" fill="#2aa83a"/></svg><span class="t" style="left:800.50px;top:557.70px;font-size:9.00px;line-height:9.00px;color:#fff;font-family:'Liberation Sans',sans-serif;font-weight:bold;">Q</span>
<svg style="position:absolute;left:818.5px;top:556px;" width="9" height="12" viewBox="0 0 9 12"><rect x="2.8" y=".3" width="3.4" height="1.5" fill="#444"/><rect x=".8" y="1.5" width="7.4" height="10" rx="1.2" fill="#fafafa" stroke="#444" stroke-width=".9"/><rect x="2.5" y="4" width="4" height="5.5" fill="#ccc"/></svg>
<svg style="position:absolute;left:833px;top:556px;" width="13" height="12" viewBox="0 0 13 12"><path d="M6.5 .5q3 2 6 2 0 6.5-6 9-6-2.5-6-9 3 0 6-2z" fill="#2a8fd8"/><path d="M3.5 6q3-2.5 6 0M4.7 7.800q1.8-1.5 3.6 0" stroke="#bfe2f8" stroke-width=".9" fill="none"/></svg>
<svg style="position:absolute;left:852.5px;top:555.5px;" width="13" height="13" viewBox="0 0 13 13"><circle cx="6.5" cy="6.5" r="6" fill="#f0c020"/><circle cx="6.5" cy="5.5" r="3" fill="#f8f0d8"/><path d="M2.5 10q4-3 8 0-4 3-8 0z" fill="#e8e0d0"/></svg>
<svg style="position:absolute;left:870px;top:555.5px;" width="14" height="13" viewBox="0 0 14 13"><path d="M2 .5v12" stroke="#333" stroke-width="1"/><path d="M2.5 1.500h6.500l-1 2.5 1 2.500h-6.500z" fill="#f4f4f4" stroke="#555" stroke-width=".6"/><circle cx="9.5" cy="9" r="3.5" fill="#e03a2a"/><path d="M8 7.500l3 3m0-3l-3 3" stroke="#fff" stroke-width="1"/></svg>
<svg style="position:absolute;left:888px;top:556px;" width="14" height="12" viewBox="0 0 14 12"><rect x=".5" y=".5" width="12" height="8.5" fill="#1a2a6a" stroke="#223" stroke-width=".7"/><rect x="2" y="2" width="4" height="4" fill="#5a9ae8"/><rect x="7" y="3" width="4" height="4" fill="#8fc0f0"/><path d="M4 11.500h6M6.5 9v2.5" stroke="#223" stroke-width="1"/></svg>
<svg style="position:absolute;left:906px;top:556px;" width="14" height="13" viewBox="0 0 14 13"><rect x=".8" y=".8" width="11.5" height="8" fill="#9a9a9a" stroke="#333" stroke-width="1.1"/><path d="M2.5 12q.5-2 2-1.500M8 12q.5-2 2-1.5" stroke="#333" stroke-width="1.2" fill="none"/></svg>
<svg style="position:absolute;left:924px;top:557px;" width="13" height="11" viewBox="0 0 13 11"><path d="M.5 10h2v-2h-2zM3.3 10h2v-4h-2zM6.1 10h2v-6h-2zM8.9 10h2v-8.500h-2z" fill="#f4f4f4" stroke="#666" stroke-width=".4"/></svg>
<svg style="position:absolute;left:941px;top:556px;" width="13" height="12" viewBox="0 0 13 12"><path d="M.8 4h2.500l3-3v10l-3-3h-2.500z" fill="#f4f4f4" stroke="#666" stroke-width=".5"/><path d="M8 3.500q1.5 2.5 0 5M9.8 2q2.5 4 0 8" stroke="#f4f4f4" stroke-width=".9" fill="none"/></svg>
<span class="t" style="left:969.75px;top:551.60px;font-size:9.20px;line-height:9.20px;color:#fff;font-family:'Liberation Sans',sans-serif;letter-spacing:-0.109px;">4:53 PM</span>
<span class="t" style="left:966.75px;top:563.70px;font-size:9.20px;line-height:9.20px;color:#fff;font-family:'Liberation Sans',sans-serif;letter-spacing:-0.270px;">7/27/2018</span>
<div style="position:absolute;left:1013px;top:547px;width:11px;height:29px;border-left:1px solid #8f8f8f;background:linear-gradient(90deg,#b0b0b0,#c9c9c9);"></div>
<div style="position:absolute;left:0px;top:19px;width:319px;height:336px;background:linear-gradient(#d6e6fa 0px,#c3daf6 12px,#c0d7f5 300px,#c5dbf7 320px,#b5cef0 325px,#cfe0f8 336px);border:1px solid #8fb0dd;border-left:none;border-radius:0 3px 3px 0;box-shadow:1px 1px 2px rgba(60,80,120,.5);"></div>
<div style="position:absolute;left:0px;top:19px;width:4px;height:336px;background:linear-gradient(90deg,#9ebde6,#d3e4f9);"></div>
<div style="position:absolute;left:4px;top:32px;width:86px;height:302px;background:#fafafa;border:1px solid #9db7da;border-right:none;"></div>
<div style="position:absolute;left:90px;top:329px;width:222px;height:4.5px;background:#e6edf7;"></div>
<div style="position:absolute;left:90px;top:35px;width:222px;height:295px;background:#fafafa;border:1px solid #8f959c;"></div>
<div style="position:absolute;left:91px;top:36px;width:220px;height:16px;background:#dde8f5;border-bottom:1px solid #c5d2e0;"></div>
<span class="t" style="left:97.00px;top:39.65px;font-size:8.30px;line-height:8.30px;color:#15306f;font-family:'Liberation Sans',sans-serif;font-weight:bold;letter-spacing:-0.068px;">Save a copy of the document</span>
<div style="position:absolute;left:5px;top:132px;width:85px;height:33px;background:linear-gradient(#ffeeb0,#ffd968 45%,#ffcf4a 55%,#ffe591);border:1px solid #e8c66a;border-radius:2px;"></div>
<div style="position:absolute;left:70px;top:133px;width:1px;height:31px;background:#f3d788;"></div>
<span class="t" style="left:38.30px;top:45.35px;font-size:8.30px;line-height:8.30px;color:#1a3480;font-family:'Liberation Sans',sans-serif;letter-spacing:0.299px;-webkit-text-stroke:.2px;"><u>N</u>ew</span>
<span class="t" style="left:38.30px;top:78.85px;font-size:8.30px;line-height:8.30px;color:#1a3480;font-family:'Liberation Sans',sans-serif;letter-spacing:0.424px;-webkit-text-stroke:.2px;"><u>O</u>pen</span>
<span class="t" style="left:38.30px;top:111.45px;font-size:8.30px;line-height:8.30px;color:#1a3480;font-family:'Liberation Sans',sans-serif;letter-spacing:-0.480px;-webkit-text-stroke:.2px;"><u>S</u>ave</span>
<span class="t" style="left:38.30px;top:144.55px;font-size:8.30px;line-height:8.30px;color:#3b3b5b;font-family:'Liberation Sans',sans-serif;letter-spacing:-0.422px;-webkit-text-stroke:.2px;">Save <u>A</u>s</span>
<svg style="position:absolute;left:78.5px;top:146.2px;" width="3" height="5" viewBox="0 0 3 5"><path d="M0 0L3 2.5L0 5Z" fill="#3b5a9b"/></svg>
<span class="t" style="left:38.30px;top:178.85px;font-size:8.30px;line-height:8.30px;color:#1a3480;font-family:'Liberation Sans',sans-serif;letter-spacing:0.187px;-webkit-text-stroke:.2px;"><u>P</u>rint</span>
<svg style="position:absolute;left:78.5px;top:180.5px;" width="3" height="5" viewBox="0 0 3 5"><path d="M0 0L3 2.5L0 5Z" fill="#3b5a9b"/></svg>
<span class="t" style="left:38.30px;top:211.85px;font-size:8.30px;line-height:8.30px;color:#1a3480;font-family:'Liberation Sans',sans-serif;letter-spacing:-0.147px;-webkit-text-stroke:.2px;">Pr<u>e</u>pare</span>
<svg style="position:absolute;left:78.5px;top:213.5px;" width="3" height="5" viewBox="0 0 3 5"><path d="M0 0L3 2.5L0 5Z" fill="#3b5a9b"/></svg>
<span class="t" style="left:38.30px;top:244.55px;font-size:8.30px;line-height:8.30px;color:#1a3480;font-family:'Liberation Sans',sans-serif;letter-spacing:-0.096px;-webkit-text-stroke:.2px;">Sen<u>d</u></span>
<svg style="position:absolute;left:78.5px;top:246.2px;" width="3" height="5" viewBox="0 0 3 5"><path d="M0 0L3 2.5L0 5Z" fill="#3b5a9b"/></svg>
<span class="t" style="left:38.30px;top:277.85px;font-size:8.30px;line-height:8.30px;color:#1a3480;font-family:'Liberation Sans',sans-serif;letter-spacing:0.111px;-webkit-text-stroke:.2px;">P<u>u</u>blish</span>
<svg style="position:absolute;left:78.5px;top:279.5px;" width="3" height="5" viewBox="0 0 3 5"><path d="M0 0L3 2.5L0 5Z" fill="#3b5a9b"/></svg>
<span class="t" style="left:38.30px;top:312.85px;font-size:8.30px;line-height:8.30px;color:#1a3480;font-family:'Liberation Sans',sans-serif;letter-spacing:-0.144px;-webkit-text-stroke:.2px;"><u>C</u>lose</span>
<div style="position:absolute;left:38px;top:298px;width:52px;height:1px;background:#c5c9cf;"></div>
<span class="t" style="left:125.50px;top:57.45px;font-size:8.30px;line-height:8.30px;color:#10246a;font-family:'Liberation Sans',sans-serif;font-weight:bold;letter-spacing:0.043px;"><u>W</u>ord Document</span>
<span class="t" style="left:125.50px;top:69.85px;font-size:8.30px;line-height:8.30px;color:#1a3480;font-family:'Liberation Sans',sans-serif;letter-spacing:0.203px;-webkit-text-stroke:.2px #1a3480;">Save the document in the default file</span>
<span class="t" style="left:125.50px;top:79.25px;font-size:8.30px;line-height:8.30px;color:#1a3480;font-family:'Liberation Sans',sans-serif;letter-spacing:0.053px;-webkit-text-stroke:.2px #1a3480;">format.</span>
<span class="t" style="left:125.50px;top:96.15px;font-size:8.30px;line-height:8.30px;color:#10246a;font-family:'Liberation Sans',sans-serif;font-weight:bold;letter-spacing:0.009px;">Word <u>T</u>emplate</span>
<span class="t" style="left:125.50px;top:108.85px;font-size:8.30px;line-height:8.30px;color:#1a3480;font-family:'Liberation Sans',sans-serif;letter-spacing:0.108px;-webkit-text-stroke:.2px #1a3480;">Save the document as a template that can</span>
<span class="t" style="left:125.50px;top:117.85px;font-size:8.30px;line-height:8.30px;color:#1a3480;font-family:'Liberation Sans',sans-serif;letter-spacing:0.242px;-webkit-text-stroke:.2px #1a3480;">be used to format future documents.</span>
<span class="t" style="left:125.50px;top:135.35px;font-size:8.30px;line-height:8.30px;color:#10246a;font-family:'Liberation Sans',sans-serif;font-weight:bold;letter-spacing:-0.010px;">Word <u>9</u>7-2003 Document</span>
<span class="t" style="left:125.50px;top:147.35px;font-size:8.30px;line-height:8.30px;color:#1a3480;font-family:'Liberation Sans',sans-serif;letter-spacing:0.165px;-webkit-text-stroke:.2px #1a3480;">Save a copy of the document that is fully</span>
<span class="t" style="left:125.50px;top:157.15px;font-size:8.30px;line-height:8.30px;color:#1a3480;font-family:'Liberation Sans',sans-serif;letter-spacing:0.181px;-webkit-text-stroke:.2px #1a3480;">compatible with Word 97-2003.</span>
<span class="t" style="left:125.50px;top:181.85px;font-size:8.30px;line-height:8.30px;color:#10246a;font-family:'Liberation Sans',sans-serif;font-weight:bold;letter-spacing:-0.081px;"><u>A</u>dobe PDF</span>
<span class="t" style="left:125.50px;top:207.55px;font-size:8.30px;line-height:8.30px;color:#10246a;font-family:'Liberation Sans',sans-serif;font-weight:bold;letter-spacing:-0.032px;"><u>F</u>ind add-ins for other file formats</span>
<span class="t" style="left:125.50px;top:219.35px;font-size:8.30px;line-height:8.30px;color:#1a3480;font-family:'Liberation Sans',sans-serif;letter-spacing:0.199px;-webkit-text-stroke:.2px #1a3480;">Learn about add-ins to save to other</span>
<span class="t" style="left:125.50px;top:229.25px;font-size:8.30px;line-height:8.30px;color:#1a3480;font-family:'Liberation Sans',sans-serif;letter-spacing:-0.126px;-webkit-text-stroke:.2px #1a3480;">formats such as PDF or XPS.</span>
<span class="t" style="left:125.50px;top:246.35px;font-size:8.30px;line-height:8.30px;color:#10246a;font-family:'Liberation Sans',sans-serif;font-weight:bold;letter-spacing:-0.161px;"><u>O</u>ther Formats</span>
<span class="t" style="left:125.50px;top:258.75px;font-size:8.30px;line-height:8.30px;color:#1a3480;font-family:'Liberation Sans',sans-serif;letter-spacing:0.143px;-webkit-text-stroke:.2px #1a3480;">Open the Save As dialog box to select from</span>
<span class="t" style="left:125.50px;top:268.35px;font-size:8.30px;line-height:8.30px;color:#1a3480;font-family:'Liberation Sans',sans-serif;letter-spacing:0.149px;-webkit-text-stroke:.2px #1a3480;">all possible file types.</span>
<div style="position:absolute;left:170.5px;top:336.5px;width:79px;height:16px;background:linear-gradient(#e4eefb,#d2e3f8 50%,#c4d9f4 52%,#d6e5f9);border:1px solid #9fbde2;border-radius:2px;"></div>
<div style="position:absolute;left:254.5px;top:336.5px;width:61px;height:16px;background:linear-gradient(#e4eefb,#d2e3f8 50%,#c4d9f4 52%,#d6e5f9);border:1px solid #9fbde2;border-radius:2px;"></div>
<span class="t" style="left:189.50px;top:340.15px;font-size:8.30px;line-height:8.30px;color:#15428b;font-family:'Liberation Sans',sans-serif;letter-spacing:0.367px;">Word Opt<u>i</u>ons</span>
<span class="t" style="left:273.00px;top:340.15px;font-size:8.30px;line-height:8.30px;color:#15428b;font-family:'Liberation Sans',sans-serif;letter-spacing:0.186px;">E<u>x</u>it Word</span>
<svg style="position:absolute;left:258.5px;top:340px;" width="9" height="9" viewBox="0 0 9 9"><path d="M1 1L8 8M8 1L1 8" stroke="#333" stroke-width="1.3" fill="none"/></svg>
<svg style="position:absolute;left:175px;top:339.5px;" width="9" height="10" viewBox="0 0 9 10"><path d="M.5 .5H6L8.5 3V9.5H.5Z" fill="#fdfdfd" stroke="#7d8796" stroke-width=".8"/><path d="M2 4.5h1.5M2 6.5h1.5" stroke="#444" stroke-width="1"/><path d="M4.5 4.5h2.5M4.5 6.5h2.5" stroke="#9aa" stroke-width=".8"/></svg>
<div style="position:absolute;left:55px;top:159px;width:55.5px;height:16.5px;background:linear-gradient(#fdfdfe,#dfe8f6);border:1px solid #8a8f98;border-radius:2px;box-shadow:1px 1px 2px rgba(0,0,0,.3);"></div>
<span class="t" style="left:58.80px;top:163.45px;font-size:8.30px;line-height:8.30px;color:#555;font-family:'Liberation Sans',sans-serif;letter-spacing:-0.353px;">Save As (F12)</span>
<svg style="position:absolute;left:2px;top:2px;" width="30" height="30" viewBox="0 0 30 30"><defs><radialGradient id="oo" cx=".5" cy=".3" r=".75"><stop offset="0" stop-color="#fff1c8"/><stop offset=".35" stop-color="#f6b53c"/><stop offset=".75" stop-color="#e07a10"/><stop offset="1" stop-color="#b85a08"/></radialGradient></defs><circle cx="14.5" cy="14.5" r="13.3" fill="url(#oo)" stroke="#a8651a" stroke-width=".8"/><ellipse cx="14.5" cy="24" rx="8" ry="3.5" fill="#ffd25a" opacity=".7"/><rect x="7" y="7.5" width="7.5" height="7" rx="1" fill="none" stroke="#d8452a" stroke-width="2"/><rect x="15.5" y="10" width="6" height="5" rx="1" fill="none" stroke="#3a7fd8" stroke-width="1.8"/><rect x="9" y="15.5" width="6" height="6" rx="1" fill="none" stroke="#f2c51a" stroke-width="1.8"/><rect x="16" y="16" width="6" height="6" rx="1" fill="none" stroke="#4aa83a" stroke-width="1.8"/></svg>
<svg style="position:absolute;left:0px;top:30px;" width="130" height="300" viewBox="0 30 130 300"><defs><linearGradient id="pg" x1="0" y1="0" x2="1" y2="1"><stop offset="0" stop-color="#ffffff"/><stop offset="1" stop-color="#dbe6f6"/></linearGradient><linearGradient id="fl" x1="0" y1="0" x2="0" y2="1"><stop offset="0" stop-color="#fbe8a8"/><stop offset="1" stop-color="#f0c860"/></linearGradient><linearGradient id="dk" x1="0" y1="0" x2="0" y2="1"><stop offset="0" stop-color="#8f86d0"/><stop offset="1" stop-color="#6a5fb5"/></linearGradient><linearGradient id="wd" x1="0" y1="0" x2="1" y2="1"><stop offset="0" stop-color="#ffffff"/><stop offset="1" stop-color="#b9d0f0"/></linearGradient></defs><path d="M12.5 38.5h11l5 5v16h-16z" fill="url(#pg)" stroke="#8fa3c2" stroke-width=".8"/><path d="M23.5 38.5v5h5" fill="#dfe8f5" stroke="#8fa3c2" stroke-width=".6"/><path d="M10.5 76.500h8l1.5 2h7v11.500h-16.500z" fill="#e8c35a" stroke="#c79a35" stroke-width=".6"/><path d="M10.5 90l4-9.500h16.500l-4 9.500z" fill="url(#fl)" stroke="#c79a35" stroke-width=".6"/><path d="M23 75.500q3-3 5.5.200M28.8 74l.2 2.3-2.3-.2" fill="none" stroke="#4a6aa8" stroke-width=".9"/><path d="M10 106h19.5v19.5h-18.0l-1.5-1.500z" fill="url(#dk)" stroke="#5a4fa5" stroke-width=".5"/><rect x="13.5" y="106.5" width="12.0" height="10.0" fill="#f4f4f6"/><path d="M13.5 109.5h12.0M13.5 112.0h12.0M13.5 114.5h12.0" stroke="#d5d5dd" stroke-width=".6"/><rect x="14.5" y="119.5" width="10.0" height="5.7" fill="#e9e9f2"/><rect x="16.0" y="120.5" width="3.0" height="4.7" fill="#5a4fa5"/><path d="M10 138.5h19.5v19.5h-18.0l-1.5-1.500z" fill="url(#dk)" stroke="#5a4fa5" stroke-width=".5"/><rect x="13.5" y="139.0" width="12.0" height="10.0" fill="#f4f4f6"/><path d="M13.5 142.0h12.0M13.5 144.5h12.0M13.5 147.0h12.0" stroke="#d5d5dd" stroke-width=".6"/><rect x="14.5" y="152.0" width="10.0" height="5.7" fill="#e9e9f2"/><rect x="16.0" y="153.0" width="3.0" height="4.7" fill="#5a4fa5"/><rect x="14" y="142" width="11" height="1.3" fill="#5ac85a"/><path d="M19.11 144.85L29.23 154.57L27.01 156.88L16.89 147.15Z" fill="#f2c24a" stroke="#8a6a2a" stroke-width=".5"/><path d="M29.23 154.57L30.67 155.96L28.45 158.27L27.01 156.88Z" fill="#4a9a4a"/><path d="M30.67 155.96L32.11 157.35L29.89 159.65L28.45 158.27Z" fill="#e05a5a"/><path d="M19.11 144.85L15.84 143.92L16.89 147.15Z" fill="#e9d2a8" stroke="#8a6a2a" stroke-width=".4"/><path d="M15.84 143.92L17.12 144.32L16.29 145.18Z" fill="#333"/><path d="M15 181l2-8.500h9l2 8.500z" fill="#fafafa" stroke="#9a9a9a" stroke-width=".6"/><rect x="10.5" y="179" width="21" height="9.5" rx="1.5" fill="#c9c9c9" stroke="#8a8a8a" stroke-width=".6"/><rect x="10.5" y="179" width="21" height="3" rx="1" fill="#e4e4e4"/><rect x="14" y="184" width="14" height="1.3" fill="#6a6a6a"/><path d="M16.5 186.500h10l1 7h-12z" fill="#b9d9f4" stroke="#7a9ac0" stroke-width=".6"/><rect x="19" y="188.5" width="5" height="3" fill="#3a8ad8"/><rect x="27" y="185.2" width="2.5" height=".9" fill="#3a8ad8"/><path d="M12.5 205h11l5 5v16h-16z" fill="url(#pg)" stroke="#8fa3c2" stroke-width=".8"/><path d="M23.5 205v5h5" fill="#dfe8f5" stroke="#8fa3c2" stroke-width=".6"/><path d="M14.5 211.500l1.5 1.5 2.5-3M14.5 215.500l1.5 1.5 2.5-3" stroke="#d8352a" stroke-width=".9" fill="none"/><path d="M15 221h10M15 223h10" stroke="#c5cfe0" stroke-width=".7"/><path d="M17.39 217.35L27.51 207.62L29.73 209.93L19.61 219.65Z" fill="#f2c24a" stroke="#8a6a2a" stroke-width=".5"/><path d="M27.51 207.62L28.95 206.23L31.17 208.54L29.73 209.93Z" fill="#4a9a4a"/><path d="M28.95 206.23L30.39 204.85L32.61 207.15L31.17 208.54Z" fill="#e05a5a"/><path d="M17.39 217.35L16.34 220.58L19.61 219.65Z" fill="#e9d2a8" stroke="#8a6a2a" stroke-width=".4"/><path d="M16.34 220.58L16.79 219.32L17.62 220.18Z" fill="#333"/><rect x="10.5" y="241" width="20.5" height="13.5" fill="url(#pg)" stroke="#8fa3c2" stroke-width=".8"/><rect x="26" y="243" width="3.2" height="3.8" fill="#e8553a"/><path d="M13 244h5M15 249h7" stroke="#8fa3c2" stroke-width=".8"/><circle cx="22.5" cy="251" r="2.8" fill="#8a8a8a"/><path d="M18 259q0-5.5 4.5-5.500t4.5 5.500z" fill="#3a6ac8"/><circle cx="28.5" cy="251.5" r="2.5" fill="#7a7a7a"/><path d="M25.5 258.500q0-4.5 3.5-4.500t3.3 4.500z" fill="#3a9a3a"/><path d="M11 275h8l1.5 2h7.500v11h-17z" fill="#e8c35a" stroke="#c79a35" stroke-width=".6"/><path d="M11 288l3-8.500h17l-3 8.500z" fill="url(#fl)" stroke="#c79a35" stroke-width=".6"/><path d="M19.5 288v3.500M12 292h15" stroke="#3aa83a" stroke-width="1.6"/><rect x="17.5" y="290.5" width="4" height="3" fill="#8a8a8a"/><path d="M11.5 310h7l1.5 1.800h8.500v11.700h-17z" fill="url(#fl)" stroke="#c79a35" stroke-width=".7"/><path d="M11.5 313h17" stroke="#f8e8b0" stroke-width=".8"/><path d="M26.5 308q2.5.5 4 4M26.3 310.300l.2-2.5 2.3.6" fill="none" stroke="#4a5a7a" stroke-width=".9"/><path d="M102 58.0h11.5l5 5v16h-16.5z" fill="url(#wd)" stroke="#7f9ccc" stroke-width=".8"/><path d="M113.5 58.0v5h5" fill="#dfe8f5" stroke="#7f9ccc" stroke-width=".6"/><path d="M108 68.5h8M105 71.5h11M105 74.0h11M105 76.5h8" stroke="#9bb6e0" stroke-width=".9"/><rect x="110" y="62.5" width="5" height="4.5" fill="#a9c4ea"/><rect x="97.5" y="61.0" width="10" height="8.5" rx="1" fill="#e4ecf8" stroke="#5f7fc0" stroke-width=".7" transform="rotate(-5 102 65.5)"/><rect x="100" y="96.5" width="18.5" height="23" fill="url(#wd)" stroke="#6a7f9f" stroke-width=".8"/><rect x="100.4" y="96.9" width="17.7" height="3.5" fill="#f0a83a"/><path d="M99 117.5l1 2.500h18.500v-.8" fill="#5a6a86"/><path d="M108 107.5h8M105 110.5h11M105 113.0h11M105 115.5h8" stroke="#9bb6e0" stroke-width=".9"/><rect x="110" y="101.5" width="5" height="4.5" fill="#a9c4ea"/><rect x="97.5" y="100.0" width="10" height="8.5" rx="1" fill="#e4ecf8" stroke="#5f7fc0" stroke-width=".7" transform="rotate(-5 102 104.5)"/><path d="M102 136.0h11.5l5 5v16h-16.5z" fill="url(#wd)" stroke="#7f9ccc" stroke-width=".8"/><path d="M113.5 136.0v5h5" fill="#dfe8f5" stroke="#7f9ccc" stroke-width=".6"/><path d="M108 146.5h8M105 149.5h11M105 152.0h11M105 154.5h8" stroke="#9bb6e0" stroke-width=".9"/><rect x="110" y="140.5" width="5" height="4.5" fill="#a9c4ea"/><rect x="97.5" y="139.0" width="10" height="9.5" fill="#3a62c0" stroke="#1f3f95" stroke-width=".6"/><path d="M104 177.5h10.0l4.5 4.5v12.5h-14.5z" fill="#ececec" stroke="#9a9a9a" stroke-width=".8"/><path d="M114.0 177.5v4.5h4.5" fill="#dfe8f5" stroke="#9a9a9a" stroke-width=".6"/><rect x="101" y="176.5" width="7.5" height="2.6" fill="#8a8a8a" stroke="#5a5a5a" stroke-width=".4"/><path d="M108.80 190.50L106.97 192.15L107.10 194.60L104.65 194.47L103.00 196.30L101.35 194.47L98.90 194.60L99.03 192.15L97.20 190.50L99.03 188.85L98.90 186.40L101.35 186.53L103.00 184.70L104.65 186.53L107.10 186.40L106.97 188.85Z" fill="#f09a1a"/><circle cx="103" cy="190.5" r="3" fill="#f8b838"/><path d="M100 206.5h10.0l4.5 4.5v14.5h-14.5z" fill="#f7f7f7" stroke="#aaaaaa" stroke-width=".8"/><path d="M110.0 206.5v4.5h4.5" fill="#dfe8f5" stroke="#aaaaaa" stroke-width=".6"/><path d="M102.5 212h8M102.5 214.500h9.500M102.5 217h9.500M102.5 219.500h9.5" stroke="#cfcfcf" stroke-width=".8"/><rect x="99" y="220.5" width="11" height="4.5" fill="#d9cdb5" stroke="#b5a88a" stroke-width=".4"/><circle cx="114.5" cy="225.5" r="4.6" fill="#2a7ae0" stroke="#1a55b0" stroke-width=".5"/><circle cx="114.5" cy="224" r="3" fill="#6aaaf4" opacity=".6"/><path d="M97.5 248h18.915v18.915h-17.415l-1.5-1.500z" fill="url(#dk)" stroke="#5a4fa5" stroke-width=".5"/><rect x="100.895" y="248.5" width="11.64" height="9.7" fill="#f4f4f6"/><path d="M100.895 251.395h11.64M100.895 253.82h11.64M100.895 256.245h11.64" stroke="#d5d5dd" stroke-width=".6"/><rect x="101.865" y="261.095" width="9.7" height="5.5200000000000005" fill="#e9e9f2"/><rect x="103.32" y="262.065" width="2.91" height="4.55" fill="#5a4fa5"/><rect x="101.5" y="251.5" width="10" height="1.2" fill="#5ac85a"/><path d="M106.13 253.87L116.80 264.54L114.54 266.80L103.87 256.13Z" fill="#f2c24a" stroke="#8a6a2a" stroke-width=".5"/><path d="M116.80 264.54L118.22 265.95L115.95 268.22L114.54 266.80Z" fill="#4a9a4a"/><path d="M118.22 265.95L119.63 267.37L117.37 269.63L115.95 268.22Z" fill="#e05a5a"/><path d="M106.13 253.87L102.88 252.88L103.87 256.13Z" fill="#e9d2a8" stroke="#8a6a2a" stroke-width=".4"/><path d="M102.88 252.88L104.15 253.30L103.30 254.15Z" fill="#333"/></svg>
<span class="t" style="left:99.83px;top:62.50px;font-size:18.00px;line-height:18.00px;color:#2a4fa8;font-family:'Liberation Serif',serif;font-weight:bold;font-style:italic;transform:scale(0.3333,0.3333);transform-origin:0 0;">W</span>
<span class="t" style="left:99.83px;top:101.50px;font-size:18.00px;line-height:18.00px;color:#2a4fa8;font-family:'Liberation Serif',serif;font-weight:bold;font-style:italic;transform:scale(0.3333,0.3333);transform-origin:0 0;">W</span>
<span class="t" style="left:99.14px;top:140.00px;font-size:8.00px;line-height:8.00px;color:#fff;font-family:'Liberation Serif',serif;font-weight:bold;font-style:italic;">W</span>
<span class="t" style="left:113.70px;top:222.45px;font-size:6.50px;line-height:6.50px;color:#fff;font-family:'Liberation Serif',serif;font-weight:bold;">i</span>
</body></html>
